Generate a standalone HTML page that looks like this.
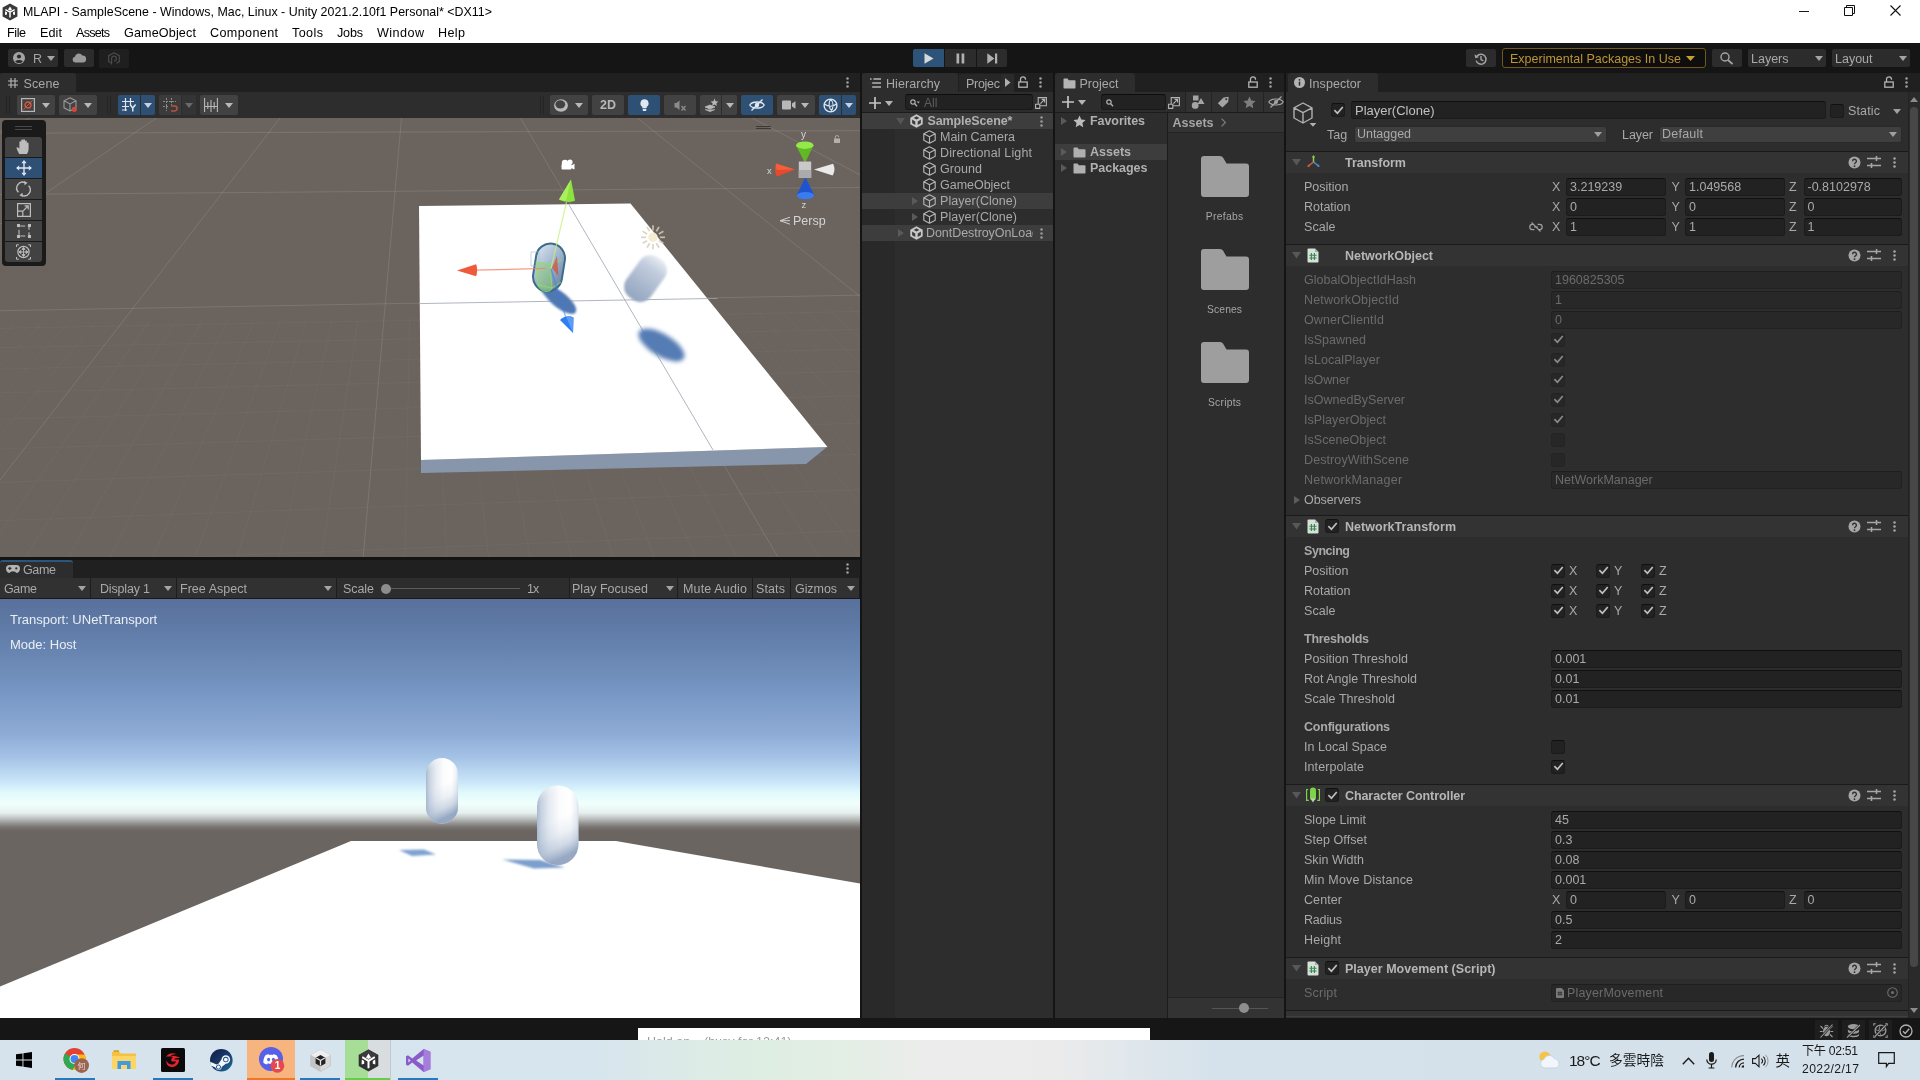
<!DOCTYPE html>
<html lang="en"><head><meta charset="utf-8"><title>Unity</title>
<style>
*{box-sizing:border-box;margin:0;padding:0}
html,body{width:1920px;height:1080px;overflow:hidden;background:#151515;}
body{font-family:"Liberation Sans","Noto Sans CJK TC",sans-serif;font-size:12.5px;color:#a9a9a9;position:relative;will-change:transform}
.a{position:absolute}
.t{position:absolute;white-space:nowrap;line-height:16px;height:16px}
.b{font-weight:bold}
.dis{color:#6b6b6b}
.fld{position:absolute;background:#222222;border:1px solid #1b1b1b;border-top-color:#101010;border-radius:3px;height:18px;padding-left:3px;line-height:16px;white-space:nowrap;overflow:hidden}
.fld.dis{background:#282828;border-color:#222;border-top-color:#1e1e1e;color:#6b6b6b}
.cb{position:absolute;width:13px;height:13px;background:#222222;border:1px solid #1b1b1b;border-top-color:#101010;border-radius:3px}
.cb.dis{background:#272727;border-color:#232323}
.btn{position:absolute;background:#454545;border-radius:2px}
svg{position:absolute;overflow:visible}
.hdr{position:absolute;left:1286px;width:622px;height:22px;background:#333333;border-top:1px solid #1a1a1a}
</style></head>
<body>
<!-- top -->
<div class="a" style="left:0px;top:0px;width:1920px;height:43px;background:#ffffff;"></div>
<svg style="left:2px;top:2.5px" width="16" height="18" viewBox="0 0 16 18"><path d="M8 0.4L15.4 4.6V13.4L8 17.6L0.6 13.4V4.6Z" fill="#3a3a3a"/><path d="M8 9.2V14.6M8 9.2L3.4 6.6M8 9.2L12.6 6.6" stroke="#ffffff" stroke-width="1.5" fill="none"/><path d="M8 3.4L10 6.6L8 7.8L6 6.6ZM3 12L3.1 8.2L5 9.3V11.4ZM13 12L12.9 8.2L11 9.3V11.4Z" fill="#ffffff"/></svg>
<div class="t" style="left:23px;top:4px;font-size:12.4px;letter-spacing:0.03px;color:#000">MLAPI - SampleScene - Windows, Mac, Linux - Unity 2021.2.10f1 Personal* &lt;DX11&gt;</div>
<div class="a" style="left:1799px;top:11px;width:10px;height:1px;background:#1a1a1a;"></div>
<svg style="left:1844px;top:5px" width="11" height="11" viewBox="0 0 11 11"><path d="M0.5 2.5H8.5V10.5H0.5Z M2.5 2.5V0.5H10.5V8.5H8.5" fill="none" stroke="#111" stroke-width="1"/></svg>
<svg style="left:1890px;top:5px" width="11" height="11" viewBox="0 0 11 11"><path d="M0.5 0.5L10.5 10.5M10.5 0.5L0.5 10.5" stroke="#111" stroke-width="1.1"/></svg>
<div class="t" style="left:7px;top:25px;font-size:12.6px;letter-spacing:-0.43px;color:#000">File</div>
<div class="t" style="left:40px;top:25px;font-size:12.6px;letter-spacing:0.10px;color:#000">Edit</div>
<div class="t" style="left:76px;top:25px;font-size:12.6px;letter-spacing:-0.76px;color:#000">Assets</div>
<div class="t" style="left:124px;top:25px;font-size:12.6px;letter-spacing:0.14px;color:#000">GameObject</div>
<div class="t" style="left:210px;top:25px;font-size:12.6px;letter-spacing:0.36px;color:#000">Component</div>
<div class="t" style="left:292px;top:25px;font-size:12.6px;letter-spacing:0.40px;color:#000">Tools</div>
<div class="t" style="left:337px;top:25px;font-size:12.6px;letter-spacing:-0.20px;color:#000">Jobs</div>
<div class="t" style="left:377px;top:25px;font-size:12.6px;letter-spacing:0.44px;color:#000">Window</div>
<div class="t" style="left:438px;top:25px;font-size:12.6px;letter-spacing:0.36px;color:#000">Help</div>
<div class="a" style="left:0px;top:43px;width:1920px;height:30px;background:#151515;"></div>
<div class="a" style="left:8px;top:49px;width:50px;height:18px;background:#2c2c2c;border-radius:2px"></div>
<svg style="left:13px;top:52px" width="12" height="12" viewBox="0 0 12 12"><circle cx="6" cy="6" r="6" fill="#a4a4a4"/><circle cx="6" cy="4.5" r="2.1" fill="#2c2c2c"/><path d="M2.2 9.6C3 7.6 9 7.6 9.8 9.6C8 11.6 4 11.6 2.2 9.6Z" fill="#2c2c2c"/></svg>
<div class="t" style="left:33px;top:50.6px;color:#a4a4a4">R</div>
<svg style="left:47.0px;top:56.0px" width="8" height="5" viewBox="0 0 8 5"><path d="M0 0H8L4.0 5Z" fill="#a4a4a4"/></svg>
<div class="a" style="left:64px;top:49px;width:30px;height:18px;background:#2c2c2c;border-radius:2px"></div>
<svg style="left:72px;top:53px" width="14" height="10" viewBox="0 0 14 10"><path d="M3.2 9.6a3 3 0 0 1-.3-5.9A4 4 0 0 1 10.3 2.6a3.5 3.5 0 0 1 .6 7Z" fill="#9a9a9a"/></svg>
<div class="a" style="left:99px;top:49px;width:30px;height:19px;background:#1f1f1f;border-radius:2px"></div>
<svg style="left:108px;top:52px" width="12" height="13" viewBox="0 0 12 13"><path d="M6 0.7L11.3 3.7V9.6L8.6 11.2M6 0.7L0.7 3.7V9.6L3.2 11" fill="none" stroke="#4a4a4a" stroke-width="1.2"/><path d="M3.6 12.6V6.6a2.4 2.4 0 1 1 2.4 2.4" fill="none" stroke="#4a4a4a" stroke-width="1.2"/></svg>
<div class="a" style="left:913px;top:49px;width:31px;height:18px;background:#2d5378;border-radius:2px 0 0 2px"></div>
<div class="a" style="left:945px;top:49px;width:31px;height:18px;background:#2c2c2c;"></div>
<div class="a" style="left:977px;top:49px;width:30px;height:18px;background:#2c2c2c;border-radius:0 2px 2px 0"></div>
<svg style="left:924px;top:53px" width="10" height="11" viewBox="0 0 10 11"><path d="M0.5 0.3V10.7L9.5 5.5Z" fill="#d8d8d8"/></svg>
<svg style="left:956px;top:53px" width="9" height="11" viewBox="0 0 9 11"><path d="M0.5 0.5H3.2V10.5H0.5ZM5.6 0.5H8.3V10.5H5.6Z" fill="#b0b0b0"/></svg>
<svg style="left:987px;top:53px" width="11" height="11" viewBox="0 0 11 11"><path d="M0.3 0.3V10.7L7.4 5.5ZM8 0.5H10.2V10.5H8Z" fill="#b0b0b0"/></svg>
<div class="a" style="left:1466px;top:49px;width:30px;height:18px;background:#2c2c2c;border-radius:2px"></div>
<svg style="left:1474px;top:51.5px" width="14" height="14" viewBox="0 0 14 14"><path d="M3 4.2A5 5 0 1 1 2.2 8.6" fill="none" stroke="#a4a4a4" stroke-width="1.5"/><path d="M0.6 2.2L1.2 6.2L5 5.2Z" fill="#a4a4a4"/><path d="M7 4V7.6L9.4 8.8" fill="none" stroke="#a4a4a4" stroke-width="1.4"/></svg>
<div class="a" style="left:1502px;top:48px;width:204px;height:20px;background:#0e0e0e;border:1px solid #71591c;border-radius:3px"></div>
<div class="t" style="left:1510px;top:50.6px;color:#bd9534">Experimental Packages In Use</div>
<svg style="left:1685.5px;top:56.0px" width="9" height="5" viewBox="0 0 9 5"><path d="M0 0H9L4.5 5Z" fill="#c9a02c"/></svg>
<div class="a" style="left:1712px;top:49px;width:30px;height:18px;background:#2c2c2c;border-radius:2px"></div>
<svg style="left:1720px;top:52px" width="14" height="13" viewBox="0 0 14 13"><circle cx="5" cy="5" r="4" fill="none" stroke="#a4a4a4" stroke-width="1.4"/><path d="M8 8L12.6 12.2" stroke="#a4a4a4" stroke-width="1.8"/></svg>
<div class="a" style="left:1748px;top:49px;width:78px;height:18px;background:#2c2c2c;border-radius:2px"></div>
<div class="t" style="left:1751px;top:50.6px;">Layers</div>
<svg style="left:1815.0px;top:56.0px" width="8" height="5" viewBox="0 0 8 5"><path d="M0 0H8L4.0 5Z" fill="#a4a4a4"/></svg>
<div class="a" style="left:1832px;top:49px;width:78px;height:18px;background:#2c2c2c;border-radius:2px"></div>
<div class="t" style="left:1835px;top:50.6px;">Layout</div>
<svg style="left:1899.0px;top:56.0px" width="8" height="5" viewBox="0 0 8 5"><path d="M0 0H8L4.0 5Z" fill="#a4a4a4"/></svg>
<!-- scene -->
<div class="a" style="left:0px;top:73px;width:860px;height:19px;background:#202020;"></div>
<div class="a" style="left:0px;top:73px;width:76px;height:19px;background:#2d2d2d;border-radius:3px 3px 0 0"></div>
<svg style="left:7.5px;top:77.5px" width="10" height="10" viewBox="0 0 10 10"><path d="M3 0V10M7 0V10M0 3H10M0 7H10" stroke="#b8b8b8" stroke-width="1.1"/></svg>
<div class="t" style="left:23.5px;top:75.6px;font-size:12.5px;letter-spacing:0.14px;">Scene</div>
<svg style="left:845.5px;top:76.5px" width="3" height="11" viewBox="0 0 3 11"><circle cx="1.5" cy="1.5" r="1.25" fill="#a0a0a0"/><circle cx="1.5" cy="5.5" r="1.25" fill="#a0a0a0"/><circle cx="1.5" cy="9.5" r="1.25" fill="#a0a0a0"/></svg>
<div class="a" style="left:0px;top:92px;width:860px;height:26px;background:#2d2d2d;"></div>
<div class="a" style="left:6px;top:96px;width:1px;height:18px;background:#242424;"></div><div class="a" style="left:9px;top:96px;width:1px;height:18px;background:#242424;"></div>
<div class="a" style="left:107px;top:96px;width:1px;height:18px;background:#242424;"></div><div class="a" style="left:110px;top:96px;width:1px;height:18px;background:#242424;"></div>
<div class="a" style="left:17px;top:95px;width:38px;height:20px;background:#424242;border-radius:2px"></div>
<svg style="left:21px;top:98px" width="14" height="14" viewBox="0 0 14 14"><rect x="0.6" y="0.6" width="12.8" height="12.8" fill="none" stroke="#b8b8b8" stroke-width="1.2"/><circle cx="7" cy="7" r="3" fill="none" stroke="#d9573f" stroke-width="1.3"/><path d="M2.5 11.5L11.5 2.5" stroke="#d9573f" stroke-width="1"/></svg>
<svg style="left:41.5px;top:103.0px" width="8" height="5" viewBox="0 0 8 5"><path d="M0 0H8L4.0 5Z" fill="#b8b8b8"/></svg>
<div class="a" style="left:59px;top:95px;width:38px;height:20px;background:#424242;border-radius:2px"></div>
<svg style="left:63px;top:97px" width="15" height="16" viewBox="0 0 15 16"><path d="M7 0.8L13 3.8V10.8L7 14L1 10.8V3.8ZM1 3.8L7 7L13 3.8M7 7V14" fill="none" stroke="#9a9a9a" stroke-width="1.1"/><circle cx="11.3" cy="12.3" r="2.6" fill="#d1473a"/></svg>
<svg style="left:83.5px;top:103.0px" width="8" height="5" viewBox="0 0 8 5"><path d="M0 0H8L4.0 5Z" fill="#b8b8b8"/></svg>
<div class="a" style="left:118px;top:95px;width:22px;height:20px;background:#2f5075;border-radius:2px 0 0 2px"></div>
<div class="a" style="left:141px;top:95px;width:14px;height:20px;background:#2f5075;border-radius:0 2px 2px 0"></div>
<svg style="left:122px;top:98px" width="16" height="14" viewBox="0 0 16 14"><path d="M3.5 0V13M8.5 0V7M0 3.5H12M0 8.5H7M0 12H5" stroke="#dfe6ee" stroke-width="1.2" fill="none"/><path d="M8 6.5L10.8 10L13.6 6.5M10.8 10V13.5" stroke="#dfe6ee" stroke-width="1.5" fill="none"/></svg>
<svg style="left:144.0px;top:103.0px" width="8" height="5" viewBox="0 0 8 5"><path d="M0 0H8L4.0 5Z" fill="#c8d2de"/></svg>
<div class="a" style="left:159px;top:95px;width:22px;height:20px;background:#3b3b3b;border-radius:2px 0 0 2px"></div>
<div class="a" style="left:182px;top:95px;width:14px;height:20px;background:#343434;border-radius:0 2px 2px 0"></div>
<svg style="left:163px;top:98px" width="15" height="14" viewBox="0 0 15 14"><path d="M3.5 0V13M8.5 0V7M0 3.5H13M0 8.5H6" stroke="#8a8a8a" stroke-width="1" stroke-dasharray="2 1" fill="none"/><path d="M8 8H11.5A2.5 2.5 0 0 1 11.5 13H8" stroke="#b4563c" stroke-width="1.6" fill="none"/></svg>
<svg style="left:185.0px;top:103.0px" width="8" height="5" viewBox="0 0 8 5"><path d="M0 0H8L4.0 5Z" fill="#6a6a6a"/></svg>
<div class="a" style="left:200px;top:95px;width:38px;height:20px;background:#424242;border-radius:2px"></div>
<svg style="left:204px;top:98px" width="14" height="14" viewBox="0 0 14 14"><path d="M0.6 0V14M3.8 4V11M7 2V14M10.2 4V11M13.4 0V14M0.6 8.5H13.4" stroke="#b8b8b8" stroke-width="1.1" fill="none"/></svg>
<svg style="left:224.5px;top:103.0px" width="8" height="5" viewBox="0 0 8 5"><path d="M0 0H8L4.0 5Z" fill="#b8b8b8"/></svg>
<div class="a" style="left:540px;top:96px;width:1px;height:18px;background:#242424;"></div><div class="a" style="left:543px;top:96px;width:1px;height:18px;background:#242424;"></div>
<div class="a" style="left:550px;top:95px;width:38px;height:20px;background:#424242;border-radius:2px"></div>
<svg style="left:554px;top:98.5px" width="14" height="13" viewBox="0 0 14 13"><ellipse cx="7" cy="6.5" rx="6.9" ry="6.2" fill="#b8b8b8"/><ellipse cx="6.3" cy="5.4" rx="4.9" ry="4.1" fill="#424242"/></svg>
<svg style="left:574.5px;top:103.0px" width="8" height="5" viewBox="0 0 8 5"><path d="M0 0H8L4.0 5Z" fill="#b8b8b8"/></svg>
<div class="a" style="left:592px;top:95px;width:32px;height:20px;background:#424242;border-radius:2px"></div>
<div class="t b" style="left:600px;top:97px;font-size:12.5px;letter-spacing:0.02px;color:#b8b8b8">2D</div>
<div class="a" style="left:628px;top:95px;width:32px;height:20px;background:#2f5075;border-radius:2px"></div>
<svg style="left:639.5px;top:99px" width="9" height="13" viewBox="0 0 9 13"><path d="M4.5 0.3a4 4 0 0 1 2.2 7.4V9.2H2.3V7.7A4 4 0 0 1 4.5 0.3Z" fill="#dfe6ee"/><rect x="2.8" y="10" width="3.4" height="2" fill="#dfe6ee"/></svg>
<div class="a" style="left:664px;top:95px;width:32px;height:20px;background:#424242;border-radius:2px"></div>
<svg style="left:674px;top:99px" width="14" height="13" viewBox="0 0 14 13"><path d="M0.5 4H2.5L5.5 1.5V11L2.5 8.5H0.5Z" fill="#8c8c8c"/><path d="M7.5 7L11.5 11.5M11.5 7L7.5 11.5" stroke="#8c8c8c" stroke-width="1.3"/></svg>
<div class="a" style="left:700px;top:95px;width:21px;height:20px;background:#424242;border-radius:2px 0 0 2px"></div>
<div class="a" style="left:722px;top:95px;width:15px;height:20px;background:#424242;border-radius:0 2px 2px 0"></div>
<svg style="left:703.5px;top:98px" width="15" height="14" viewBox="0 0 15 14"><path d="M1 9L6 7L11 9L6 11ZM1 11.5L6 13.5L11 11.5" fill="#b8b8b8" stroke="#b8b8b8" stroke-width="0.8"/><path d="M10.5 0.5L11.6 3.2L14.4 3.6L12.3 5.4L12.9 8L10.5 6.6L8.1 8L8.7 5.4L6.6 3.6L9.4 3.2Z" fill="#b8b8b8"/></svg>
<svg style="left:725.5px;top:103.0px" width="8" height="5" viewBox="0 0 8 5"><path d="M0 0H8L4.0 5Z" fill="#b8b8b8"/></svg>
<div class="a" style="left:741px;top:95px;width:32px;height:20px;background:#2f5075;border-radius:2px"></div>
<svg style="left:749px;top:99px" width="16" height="12" viewBox="0 0 16 12"><path d="M0.8 6C3 2 13 2 15.2 6C13 10 3 10 0.8 6Z" fill="none" stroke="#dfe6ee" stroke-width="1.3"/><circle cx="8" cy="6" r="2.2" fill="#dfe6ee"/><path d="M2.5 11.5L13.5 0.5" stroke="#dfe6ee" stroke-width="1.4"/></svg>
<div class="a" style="left:777px;top:95px;width:38px;height:20px;background:#424242;border-radius:2px"></div>
<svg style="left:782px;top:100px" width="14" height="10" viewBox="0 0 14 10"><rect x="0" y="0.5" width="9" height="9" rx="1" fill="#b8b8b8"/><path d="M10 3.5L13.5 1.2V8.8L10 6.5Z" fill="#b8b8b8"/></svg>
<svg style="left:800.5px;top:103.0px" width="8" height="5" viewBox="0 0 8 5"><path d="M0 0H8L4.0 5Z" fill="#b8b8b8"/></svg>
<div class="a" style="left:819px;top:95px;width:22px;height:20px;background:#2f5075;border-radius:2px 0 0 2px"></div>
<div class="a" style="left:842px;top:95px;width:14px;height:20px;background:#2f5075;border-radius:0 2px 2px 0"></div>
<svg style="left:822.5px;top:97.5px" width="15" height="15" viewBox="0 0 15 15"><circle cx="7.5" cy="7.5" r="6.4" fill="none" stroke="#dfe6ee" stroke-width="1.4"/><path d="M1.5 6C5 9 10 9 13.5 6M7.5 1.2C5 5 5.6 10.5 9.5 13.5M7.5 1.2C10.5 4 11.5 9 7.5 14" fill="none" stroke="#dfe6ee" stroke-width="1.1"/></svg>
<svg style="left:845.0px;top:103.0px" width="8" height="5" viewBox="0 0 8 5"><path d="M0 0H8L4.0 5Z" fill="#c8d2de"/></svg>
<svg style="left:0;top:118px" width="860" height="439" viewBox="0 118 860 439"><defs><clipPath id="svc"><rect x="0" y="118" width="860" height="439"/></clipPath><linearGradient id="cap2" x1="0.5" y1="0" x2="0.5" y2="1"><stop offset="0" stop-color="#e9edf3"/><stop offset="0.25" stop-color="#c3cede"/><stop offset="0.65" stop-color="#a9b7cd"/><stop offset="1" stop-color="#93a5c0"/></linearGradient><linearGradient id="cap1" x1="0" y1="0" x2="1" y2="1"><stop offset="0" stop-color="#dfe8f2"/><stop offset="0.5" stop-color="#9db4cc"/><stop offset="1" stop-color="#5f7f9e"/></linearGradient><filter id="bl1" x="-20%" y="-20%" width="140%" height="140%"><feGaussianBlur stdDeviation="1.2"/></filter><filter id="bl05" x="-20%" y="-20%" width="140%" height="140%"><feGaussianBlur stdDeviation="0.7"/></filter><filter id="bl2" x="-20%" y="-20%" width="140%" height="140%"><feGaussianBlur stdDeviation="2"/></filter></defs><g clip-path="url(#svc)"><rect x="0" y="118" width="860" height="439" fill="#6b635e"/><path d="M-265.1 329.3L-1103.5 806.6M-236.5 328.8L-1035.7 802.8M-208.1 328.2L-968.5 799.1M-179.9 327.7L-902.0 795.4M-123.7 326.6L-771.2 788.2M-95.9 326.1L-706.8 784.6M-68.1 325.5L-643.0 781.1M-40.5 325.0L-579.9 777.6M-13.1 324.5L-517.5 774.2M14.3 324.0L-455.7 770.7M41.5 323.4L-394.5 767.4M68.6 322.9L-333.9 764.0M95.6 322.4L-273.9 760.7M149.1 321.4L-155.7 754.2M175.7 320.8L-97.5 750.9M202.2 320.3L-39.9 747.8M228.5 319.8L17.2 744.6M254.8 319.3L73.8 741.5M280.9 318.8L129.7 738.4M306.9 318.3L185.2 735.3M332.7 317.8L240.1 732.3M358.5 317.3L294.5 729.3M409.7 316.3L401.8 723.3M435.1 315.9L454.7 720.4M460.4 315.4L507.1 717.5M485.5 314.9L559.0 714.6M510.6 314.4L610.4 711.8M535.6 313.9L661.3 709.0M560.4 313.4L711.8 706.2M585.1 313.0L761.8 703.4M609.8 312.5L811.4 700.7M658.7 311.5L909.2 695.3M683.0 311.1L957.4 692.6M707.2 310.6L1005.2 690.0M731.3 310.1L1052.6 687.4M755.3 309.7L1099.6 684.8M779.1 309.2L1146.2 682.2M802.9 308.8L1192.3 679.6M826.6 308.3L1238.1 677.1M850.1 307.9L1283.4 674.6M897.0 307.0L1372.9 669.6M920.2 306.5L1417.1 667.2M943.4 306.1L1460.9 664.8M966.5 305.6L1504.4 662.4M989.4 305.2L1547.5 660.0M1012.3 304.7L1590.2 657.6M1035.1 304.3L1632.5 655.3M1057.7 303.9L1674.5 653.0M1080.3 303.4L1716.2 650.7M-441.0 337.0L1220.1 304.4M-486.7 358.0L1256.7 321.0M-537.4 381.4L1296.8 339.1M-594.3 407.7L1341.0 359.1M-658.3 437.2L1389.7 381.1M-730.9 470.7L1444.0 405.7M-814.1 509.1L1504.6 433.1M-910.3 553.5L1572.9 463.9M-1022.9 605.4L1650.3 498.9M-1316.8 741.0L1840.9 585.2" stroke="#ffffff" stroke-opacity="0.03" stroke-width="1" fill="none"/><path d="M-93.3 116.3L-2297.3 872.6M34.4 116.1L-1526.5 830.0M159.5 115.9L-836.3 791.8M281.9 115.7L-214.5 757.4M401.7 115.5L348.4 726.3M519.0 115.4L860.5 698.0M633.9 115.2L1328.4 672.1M746.5 115.0L1757.5 648.4M856.8 114.9L2152.5 626.5M964.9 114.7L2517.2 606.4M-100.3 133.5L921.7 130.5M-270.1 196.7L1069.0 185.8M-606.1 321.7L1337.5 286.5M-1585.3 685.9L1981.8 528.2" stroke="#ffffff" stroke-opacity="0.115" stroke-width="1" fill="none"/><path d="M421 460L827 447L806 464L421 473Z" fill="#8896ac"/><path d="M419 206L630.5 203.5L827.5 447L421 460Z" fill="#ffffff"/><path d="M419 303.6L717.5 298.4" stroke="#9aa3ad" stroke-width="0.8" fill="none"/><path d="M568.8 204.5L713 450" stroke="#9aa3ad" stroke-width="0.8" fill="none"/><path d="M541 287C548 283 562 290 570 299C578 307 578 314 572 314C564 314 552 305 546 297C542 292 539 289 541 287Z" fill="#4f78b3" filter="url(#bl1)"/><ellipse cx="661.5" cy="345" rx="26" ry="11" transform="rotate(31 661.5 345)" fill="#547bb4" filter="url(#bl2)"/><rect x="630.5" y="254" width="30" height="49" rx="13" transform="rotate(36 645.5 278.5)" fill="url(#cap2)" filter="url(#bl1)"/><rect x="534.5" y="243.5" width="29" height="48" rx="14.5" transform="rotate(9 549 267.5)" fill="url(#cap1)" stroke="#3d6c8a" stroke-width="2"/><path d="M536 262L538 285L552 288L550 264ZM550 264L562 260M552 288L561 282M538 285C540 292 550 294 552 288" fill="#8fd46a" fill-opacity="0.45" stroke="#8fe05a" stroke-width="0.8"/><path d="M552 268L557 256L558.5 276Z" fill="#d8503c" fill-opacity="0.75"/><rect x="531" y="252" width="8" height="14" fill="none" stroke="#9ab8d8" stroke-width="0.6"/><path d="M551 268.5L566.5 202" stroke="#c4f07c" stroke-width="1.2" stroke-opacity="0.75"/><path d="M571 179.5L575 200.5C571 203 563 202 559 199.5Z" fill="#8de33c"/><path d="M571 179.5L566 201L559 199.5Z" fill="#a8f060"/><path d="M546 268.4L475 270.2" stroke="#f08468" stroke-width="1.2" stroke-opacity="0.8"/><path d="M457 270.5L476 264.2C477.5 267 477.5 273 476 276.2Z" fill="#f05a3c"/><path d="M551 269L566 318" stroke="#3c78e6" stroke-width="1.4" stroke-opacity="0.5"/><path d="M573 333L560 320C563 316 570 315 573.5 317.5Z" fill="#2f7df0"/><path d="M573 333L573.5 317.5L566 316.5Z" fill="#5a9cf8"/><g fill="#ffffff"><circle cx="565" cy="163" r="3.2"/><circle cx="570" cy="162" r="2.6"/><rect x="561.5" y="164" width="10" height="5.5" rx="1"/><path d="M571 165.5L574.5 163.8V169.6L571 168Z"/></g><path d="M659.8 237.3L665.0 237.3" stroke="#d6cfba" stroke-opacity="0.85" stroke-width="1.7"/><path d="M658.9 240.7L663.4 243.3" stroke="#d6cfba" stroke-opacity="0.85" stroke-width="1.7"/><path d="M656.4 243.2L659.0 247.7" stroke="#d6cfba" stroke-opacity="0.85" stroke-width="1.7"/><path d="M653.0 244.1L653.0 249.3" stroke="#d6cfba" stroke-opacity="0.85" stroke-width="1.7"/><path d="M649.6 243.2L647.0 247.7" stroke="#d6cfba" stroke-opacity="0.85" stroke-width="1.7"/><path d="M647.1 240.7L642.6 243.3" stroke="#d6cfba" stroke-opacity="0.85" stroke-width="1.7"/><path d="M646.2 237.3L641.0 237.3" stroke="#d6cfba" stroke-opacity="0.85" stroke-width="1.7"/><path d="M647.1 233.9L642.6 231.3" stroke="#d6cfba" stroke-opacity="0.85" stroke-width="1.7"/><path d="M649.6 231.4L647.0 226.9" stroke="#d6cfba" stroke-opacity="0.85" stroke-width="1.7"/><path d="M653.0 230.5L653.0 225.3" stroke="#d6cfba" stroke-opacity="0.85" stroke-width="1.7"/><path d="M656.4 231.4L659.0 226.9" stroke="#d6cfba" stroke-opacity="0.85" stroke-width="1.7"/><path d="M658.9 233.9L663.4 231.3" stroke="#d6cfba" stroke-opacity="0.85" stroke-width="1.7"/><circle cx="653" cy="237.3" r="4.7" fill="#f6ecd0"/><g><path d="M796 145.5C799 142 810 142 813.5 145.5L805 163Z" fill="#62b822"/><ellipse cx="804.8" cy="145.2" rx="8.7" ry="3.7" fill="#93e84a"/><path d="M776 163.4L795 169.6L777 176.6C774.6 173 774.6 167 776 163.4Z" fill="#e8482c"/><path d="M776 163.4L795 169.6L776.4 170Z" fill="#f0603c"/><path d="M833 163.8L814 169.6L832.6 175.4C835 172 835 167 833 163.8Z" fill="#e9e9e9"/><path d="M805.4 177L814.4 195.5C810.4 200.4 800 200.4 796.6 195.5Z" fill="#1f54cf"/><ellipse cx="805.5" cy="195.6" rx="8.6" ry="3.6" fill="#3a7cf0"/><rect x="798.8" y="161.5" width="12.4" height="16.5" fill="#c8c8c8"/><path d="M798.8 170H811.2V178H798.8Z" fill="#ababab"/></g><text x="801" y="137.5" font-size="10" fill="#d8d8d8" font-family="Liberation Sans, sans-serif">y</text><text x="767" y="174" font-size="9.5" fill="#d8d8d8" font-family="Liberation Sans, sans-serif">x</text><text x="801.5" y="208" font-size="9.5" fill="#d8d8d8" font-family="Liberation Sans, sans-serif">z</text><path d="M790 217.2L780 220.7L790 224.2M780 220.7H790" stroke="#d0d0d0" stroke-width="1" fill="none"/><text x="793" y="225" font-size="12.5" fill="#d4d4d4" font-family="Liberation Sans, sans-serif">Persp</text><rect x="834" y="138.5" width="6" height="4.5" fill="#b5b0ac"/><path d="M835.3 138.5V137.2a1.7 1.7 0 0 1 3.4 0" stroke="#b5b0ac" stroke-width="0.9" fill="none"/><path d="M756 126.5H771M756 128.5H771" stroke="#3d3834" stroke-width="1"/></g></svg>
<div class="a" style="left:2px;top:120px;width:44px;height:146px;background:#1a1a1a;border-radius:4px"></div>
<div class="a" style="left:15px;top:126px;width:17px;height:1px;background:#4a4a4a;"></div><div class="a" style="left:15px;top:129px;width:17px;height:1px;background:#4a4a4a;"></div>
<div class="a" style="left:5px;top:137px;width:37px;height:20px;background:#424242;border-radius:3px 3px 0 0"></div>
<div class="a" style="left:5px;top:158px;width:37px;height:20px;background:#2f5075;"></div>
<div class="a" style="left:5px;top:179px;width:37px;height:20px;background:#424242;"></div>
<div class="a" style="left:5px;top:200px;width:37px;height:20px;background:#424242;"></div>
<div class="a" style="left:5px;top:221px;width:37px;height:20px;background:#424242;"></div>
<div class="a" style="left:5px;top:242px;width:37px;height:20px;background:#424242;border-radius:0 0 3px 3px"></div>
<svg style="left:16px;top:139px" width="15" height="16" viewBox="0 0 15 16"><path d="M3.2 15C1.8 12.5 0.4 10 0.6 8.6C1.4 7.6 2.6 8.6 3.4 9.8V3.2C3.4 1.8 5.2 1.8 5.2 3.2V1.6C5.2 0.2 7.1 0.2 7.1 1.6V1.2C7.1 -0.1 9 -0.1 9 1.4V2.4C9 1.2 10.8 1.2 10.8 2.6V4.4C11 3.2 12.6 3.4 12.6 4.8V9.5C12.6 12 11.8 13.5 11 15Z" fill="#bdbdbd"/></svg>
<svg style="left:15.5px;top:160px" width="16" height="16" viewBox="0 0 16 16"><path d="M8 0L10.6 3.2H8.7V7.3H12.8V5.4L16 8L12.8 10.6V8.7H8.7V12.8H10.6L8 16L5.4 12.8H7.3V8.7H3.2V10.6L0 8L3.2 5.4V7.3H7.3V3.2H5.4Z" fill="#dfe6ee"/></svg>
<svg style="left:16px;top:181px" width="15" height="16" viewBox="0 0 15 16"><path d="M9.2 1.6A6 6 0 0 0 2.4 11.2M5.8 14.4A6 6 0 0 0 12.6 4.8" fill="none" stroke="#bdbdbd" stroke-width="1.4"/><path d="M8 0L11.6 1.8L8.6 4.2ZM7 16L3.4 14.2L6.4 11.8Z" fill="#bdbdbd"/></svg>
<svg style="left:16.5px;top:202.5px" width="14" height="14" viewBox="0 0 14 14"><path d="M0.6 0.6H13.4V13.4H0.6Z" fill="none" stroke="#bdbdbd" stroke-width="1.2"/><path d="M0.6 8.2H5.8V13.4" fill="none" stroke="#bdbdbd" stroke-width="1.2"/><path d="M6.2 7.8L11 3M7.6 2.8H11.2V6.4" fill="none" stroke="#bdbdbd" stroke-width="1.2"/></svg>
<svg style="left:16.5px;top:223.5px" width="14" height="14" viewBox="0 0 14 14"><path d="M2 2H12V12H2Z" fill="none" stroke="#bdbdbd" stroke-width="1.1" stroke-dasharray="5 2.5" stroke-dashoffset="-1.2"/><rect x="0" y="0" width="3" height="3" fill="#bdbdbd"/><rect x="11" y="0" width="3" height="3" fill="#bdbdbd"/><rect x="0" y="11" width="3" height="3" fill="#bdbdbd"/><rect x="11" y="11" width="3" height="3" fill="#bdbdbd"/></svg>
<svg style="left:16px;top:244px" width="15" height="16" viewBox="0 0 15 16"><circle cx="7.5" cy="8" r="5.6" fill="none" stroke="#bdbdbd" stroke-width="1.2"/><path d="M7.5 3.4L9 5.4H6ZM7.5 12.6L9 10.6H6ZM2.9 8L4.9 6.5V9.5ZM12.1 8L10.1 6.5V9.5ZM7.5 5V11M4.5 8H10.5" stroke="#bdbdbd" stroke-width="0.9" fill="#bdbdbd"/><path d="M0.5 3V0.8H2.8M12.2 0.8H14.5V3M0.5 13V15.2H2.8M12.2 15.2H14.5V13" fill="none" stroke="#bdbdbd" stroke-width="1"/></svg>
<div class="a" style="left:0px;top:557px;width:860px;height:3px;background:#141414;"></div>
<!-- game -->
<div class="a" style="left:0px;top:560px;width:860px;height:18px;background:#202020;"></div>
<div class="a" style="left:0px;top:560px;width:73px;height:18px;background:#2d2d2d;border-radius:3px 3px 0 0;border-top:2px solid #2c5580"></div>
<svg style="left:6px;top:564.5px" width="14" height="8" viewBox="0 0 14 8"><path d="M3.6 0H10.4A3.6 3.6 0 0 1 14 3.6C14 6 12.6 8 11 8C9.8 8 9.4 6.4 8.4 6.4H5.6C4.6 6.4 4.2 8 3 8C1.4 8 0 6 0 3.6A3.6 3.6 0 0 1 3.6 0Z" fill="#b4b4b4"/><path d="M3.8 1.8V5M2.2 3.4H5.4" stroke="#2d2d2d" stroke-width="1.1"/><circle cx="10.3" cy="3.4" r="1.1" fill="#2d2d2d"/></svg>
<div class="t" style="left:23px;top:561.6px;font-size:12.5px;letter-spacing:-0.35px;">Game</div>
<svg style="left:845.5px;top:562.5px" width="3" height="11" viewBox="0 0 3 11"><circle cx="1.5" cy="1.5" r="1.25" fill="#a0a0a0"/><circle cx="1.5" cy="5.5" r="1.25" fill="#a0a0a0"/><circle cx="1.5" cy="9.5" r="1.25" fill="#a0a0a0"/></svg>
<div class="a" style="left:0px;top:578px;width:860px;height:21px;background:#2d2d2d;"></div>
<div class="a" style="left:0px;top:578px;width:91px;height:20px;background:#313131;border-right:1px solid #1d1d1d"></div>
<div class="a" style="left:91px;top:578px;width:86px;height:20px;background:#313131;border-right:1px solid #1d1d1d"></div>
<div class="a" style="left:177px;top:578px;width:160px;height:20px;background:#313131;border-right:1px solid #1d1d1d"></div>
<div class="t" style="left:4px;top:581px;font-size:12.5px;letter-spacing:-0.35px;">Game</div>
<svg style="left:78.0px;top:586.0px" width="8" height="5" viewBox="0 0 8 5"><path d="M0 0H8L4.0 5Z" fill="#a4a4a4"/></svg>
<div class="t" style="left:100px;top:581px;font-size:12.5px;letter-spacing:-0.18px;">Display 1</div>
<svg style="left:164.0px;top:586.0px" width="8" height="5" viewBox="0 0 8 5"><path d="M0 0H8L4.0 5Z" fill="#a4a4a4"/></svg>
<div class="t" style="left:180px;top:581px;font-size:12.5px;letter-spacing:0.03px;">Free Aspect</div>
<svg style="left:324.0px;top:586.0px" width="8" height="5" viewBox="0 0 8 5"><path d="M0 0H8L4.0 5Z" fill="#a4a4a4"/></svg>
<div class="t" style="left:343px;top:581px;font-size:12.5px;letter-spacing:-0.07px;">Scale</div>
<div class="a" style="left:386px;top:588px;width:134px;height:1px;background:#5a5a5a;"></div>
<div class="a" style="left:380.5px;top:583.5px;width:10px;height:10px;background:#8c8c8c;border-radius:50%"></div>
<div class="t" style="left:527px;top:581px;font-size:12.5px;letter-spacing:-1.00px;">1x</div>
<div class="a" style="left:569px;top:578px;width:1px;height:20px;background:#1d1d1d;"></div>
<div class="a" style="left:570px;top:578px;width:108px;height:20px;background:#313131;border-right:1px solid #1d1d1d"></div>
<div class="a" style="left:678px;top:578px;width:75px;height:20px;background:#313131;border-right:1px solid #1d1d1d"></div>
<div class="a" style="left:753px;top:578px;width:38px;height:20px;background:#313131;border-right:1px solid #1d1d1d"></div>
<div class="a" style="left:791px;top:578px;width:69px;height:20px;background:#313131;border-right:1px solid #1d1d1d"></div>
<div class="t" style="left:572px;top:581px;font-size:12.5px;letter-spacing:0.02px;">Play Focused</div>
<svg style="left:665.5px;top:586.0px" width="8" height="5" viewBox="0 0 8 5"><path d="M0 0H8L4.0 5Z" fill="#a4a4a4"/></svg>
<div class="t" style="left:683px;top:581px;font-size:12.5px;letter-spacing:0.16px;">Mute Audio</div>
<div class="t" style="left:756px;top:581px;font-size:12.5px;letter-spacing:0.12px;">Stats</div>
<div class="t" style="left:795px;top:581px;font-size:12.5px;letter-spacing:-0.07px;">Gizmos</div>
<svg style="left:847.0px;top:586.0px" width="8" height="5" viewBox="0 0 8 5"><path d="M0 0H8L4.0 5Z" fill="#a4a4a4"/></svg>
<div class="a" style="left:0px;top:598px;width:860px;height:1px;background:#1a1a1a;"></div>
<svg style="left:0;top:599px" width="860" height="419" viewBox="0 599 860 419"><defs><linearGradient id="sky" x1="0" y1="599" x2="0" y2="841" gradientUnits="userSpaceOnUse"><stop offset="0.000" stop-color="#58709c"/><stop offset="0.178" stop-color="#6480ac"/><stop offset="0.368" stop-color="#7694c1"/><stop offset="0.562" stop-color="#8facd7"/><stop offset="0.657" stop-color="#a5c3e6"/><stop offset="0.752" stop-color="#c8e4f8"/><stop offset="0.802" stop-color="#e1fafc"/><stop offset="0.847" stop-color="#f0fffc"/><stop offset="0.884" stop-color="#e6f0ee"/><stop offset="0.909" stop-color="#b9bebc"/><stop offset="0.926" stop-color="#969694"/><stop offset="0.942" stop-color="#7a7572"/><stop offset="0.959" stop-color="#6b6561"/><stop offset="1.000" stop-color="#6b6561"/></linearGradient><linearGradient id="gcap" x1="0" y1="0" x2="1" y2="0"><stop offset="0" stop-color="#a9b9cf"/><stop offset="0.10" stop-color="#c6d2e1"/><stop offset="0.3" stop-color="#e6ebf2"/><stop offset="0.55" stop-color="#fbfcfd"/><stop offset="0.8" stop-color="#ffffff"/><stop offset="0.94" stop-color="#eef2f7"/><stop offset="1" stop-color="#d9e1ec"/></linearGradient><linearGradient id="gcapv" x1="0" y1="0" x2="0.25" y2="1"><stop offset="0" stop-color="#ffffff" stop-opacity="0.5"/><stop offset="0.2" stop-color="#ffffff" stop-opacity="0"/><stop offset="0.5" stop-color="#8ea2c0" stop-opacity="0"/><stop offset="0.7" stop-color="#8ea2c0" stop-opacity="0.14"/><stop offset="0.85" stop-color="#8ea2c0" stop-opacity="0.4"/><stop offset="1" stop-color="#7d93b4" stop-opacity="0.8"/></linearGradient><filter id="gb" x="-20%" y="-50%" width="140%" height="200%"><feGaussianBlur stdDeviation="0.9"/></filter><filter id="gb2" x="-10%" y="-10%" width="120%" height="120%"><feGaussianBlur stdDeviation="0.5"/></filter><clipPath id="gvc"><rect x="0" y="599" width="860" height="419"/></clipPath></defs><g clip-path="url(#gvc)"><rect x="0" y="599" width="860" height="260" fill="url(#sky)"/><rect x="0" y="840" width="860" height="178" fill="#6b6561"/><path d="M351 841H616L860 883.5V1018H0V986.5Z" fill="#ffffff"/><path d="M399 850L424 849.6L436 854.5L412 856Z" fill="#7fa3d0" filter="url(#gb)"/><path d="M502 859.5L540 860L565 867.5L534 868.5Z" fill="#7b9fcd" filter="url(#gb)"/><g filter="url(#gb2)"><rect x="426" y="758" width="32" height="65.5" rx="16.0" fill="url(#gcap)"/><rect x="426" y="758" width="32" height="65.5" rx="16.0" fill="url(#gcapv)"/></g><g filter="url(#gb2)"><rect x="537" y="785.5" width="41.5" height="79.5" rx="20.75" fill="url(#gcap)"/><rect x="537" y="785.5" width="41.5" height="79.5" rx="20.75" fill="url(#gcapv)"/></g></g></svg>
<div class="t" style="left:10px;top:612px;color:#e9eef5;font-size:13px">Transport: UNetTransport</div>
<div class="t" style="left:10px;top:637px;color:#e9eef5;font-size:13px">Mode: Host</div>
<!-- hier -->
<div class="a" style="left:860px;top:73px;width:2px;height:945px;background:#141414;"></div>
<div class="a" style="left:862px;top:73px;width:191px;height:19px;background:#202020;"></div>
<div class="a" style="left:862px;top:73px;width:96px;height:19px;background:#2d2d2d;border-radius:3px 3px 0 0"></div>
<svg style="left:870px;top:77.5px" width="11" height="10" viewBox="0 0 11 10"><path d="M0 1H1.6M3.4 1H11M2.2 5H11M2.2 9H11M0 5H0.1" stroke="#b4b4b4" stroke-width="1.3" fill="none"/></svg>
<div class="t" style="left:886px;top:75.7px;font-size:12.5px;letter-spacing:0.06px;">Hierarchy</div>
<div class="a" style="left:959px;top:74px;width:42px;height:18px;background:#272727;border-radius:3px 3px 0 0"></div>
<div class="t" style="left:966px;top:75.7px;font-size:12.5px;letter-spacing:-0.29px;width:34.5px;overflow:hidden">Projec</div>
<div class="a" style="left:1001px;top:74px;width:13px;height:18px;background:#2b2b2b;"></div>
<svg style="left:1004.75px;top:78.0px" width="5.5" height="9" viewBox="0 0 5.5 9"><path d="M0 0V9L5.5 4.5Z" fill="#b0b0b0"/></svg>
<svg style="left:1017.5px;top:76px" width="10" height="12" viewBox="0 0 10 12"><path d="M2.5 6V3.3a2.5 2.5 0 0 1 5 0V3.8" fill="none" stroke="#b4b4b4" stroke-width="1.3"/><rect x="0.8" y="6" width="8.4" height="5.2" fill="none" stroke="#b4b4b4" stroke-width="1.3"/></svg>
<svg style="left:1038.5px;top:77.0px" width="3" height="11" viewBox="0 0 3 11"><circle cx="1.5" cy="1.5" r="1.25" fill="#a0a0a0"/><circle cx="1.5" cy="5.5" r="1.25" fill="#a0a0a0"/><circle cx="1.5" cy="9.5" r="1.25" fill="#a0a0a0"/></svg>
<div class="a" style="left:862px;top:92px;width:191px;height:20px;background:#2d2d2d;"></div>
<div class="a" style="left:862px;top:112px;width:191px;height:1px;background:#1c1c1c;"></div>
<svg style="left:869px;top:96.5px" width="12" height="12" viewBox="0 0 12 12"><path d="M6 0V12M0 6H12" stroke="#c4c4c4" stroke-width="1.7"/></svg>
<svg style="left:885.0px;top:100.5px" width="8" height="5" viewBox="0 0 8 5"><path d="M0 0H8L4.0 5Z" fill="#b4b4b4"/></svg>
<div class="a" style="left:905px;top:94px;width:128px;height:16px;background:#222222;border:1px solid #191919;border-top-color:#0d0d0d;border-radius:3px"></div>
<svg style="left:910px;top:98.5px" width="10" height="9" viewBox="0 0 10 9"><circle cx="3" cy="3" r="2.2" fill="none" stroke="#b4b4b4" stroke-width="1.2"/><path d="M4.8 4.8L7 7.2" stroke="#b4b4b4" stroke-width="1.3"/><path d="M6.8 2.6H9.8L8.3 4.4Z" fill="#b4b4b4"/></svg>
<div class="t" style="left:924px;top:94.5px;color:#5e5e5e;font-size:12px">All</div>
<svg style="left:1035px;top:96.5px" width="12" height="12" viewBox="0 0 12 12"><path d="M3.2 0.6H11.4V8.8H3.2Z" fill="none" stroke="#b4b4b4" stroke-width="1.1"/><path d="M0.6 7.2H4.8V11.4H0.6Z" fill="#222222" stroke="#b4b4b4" stroke-width="1.1"/><path d="M5.4 6.6L9.4 2.6M6.6 2.4H9.6V5.4" fill="none" stroke="#b4b4b4" stroke-width="1.1"/></svg>
<div class="a" style="left:862px;top:113px;width:191px;height:905px;background:#2d2d2d;"></div>
<div class="a" style="left:862px;top:113px;width:33px;height:905px;background:#292929;"></div>
<div class="a" style="left:862px;top:113px;width:191px;height:16px;background:#3d3d3d;"></div>
<svg style="left:896.0px;top:117.75px" width="9" height="6.5" viewBox="0 0 9 6.5"><path d="M0 0H9L4.5 6.5Z" fill="#555555"/></svg>
<svg style="left:910px;top:114px" width="13" height="14" viewBox="0 0 13 14"><path d="M6.5 0.2L12.7 3.7V10.3L6.5 13.8L0.3 10.3V3.7Z" fill="#c8c8c8"/><path d="M6.5 2.3L9.3 3.9L6.5 5.5L3.7 3.9Z" fill="#3d3d3d"/><path d="M2.1 5.6L5.3 7.5V10.9L2.1 9.2Z" fill="#3d3d3d"/><path d="M10.9 5.6L7.7 7.5V10.9L10.9 9.2Z" fill="#3d3d3d"/></svg>
<div class="t b" style="left:927.5px;top:113px;font-size:12.5px;letter-spacing:-0.11px;color:#b0b0b0">SampleScene*</div>
<svg style="left:1039.5px;top:115.5px" width="3" height="11" viewBox="0 0 3 11"><circle cx="1.5" cy="1.5" r="1.25" fill="#9a9a9a"/><circle cx="1.5" cy="5.5" r="1.25" fill="#9a9a9a"/><circle cx="1.5" cy="9.5" r="1.25" fill="#9a9a9a"/></svg>
<div class="a" style="left:862px;top:193px;width:191px;height:16px;background:#3d3d3d;"></div>
<svg style="left:923px;top:130px" width="13" height="14" viewBox="0 0 13 14"><path d="M6.5 0.8L12.2 3.8V10.2L6.5 13.2L0.8 10.2V3.8ZM0.8 3.8L6.5 6.8L12.2 3.8M6.5 6.8V13.2" fill="none" stroke="#b4b4b4" stroke-width="1.15" stroke-linejoin="round"/></svg>
<div class="t" style="left:940px;top:129px;font-size:12.5px;letter-spacing:-0.00px;">Main Camera</div>
<svg style="left:923px;top:146px" width="13" height="14" viewBox="0 0 13 14"><path d="M6.5 0.8L12.2 3.8V10.2L6.5 13.2L0.8 10.2V3.8ZM0.8 3.8L6.5 6.8L12.2 3.8M6.5 6.8V13.2" fill="none" stroke="#b4b4b4" stroke-width="1.15" stroke-linejoin="round"/></svg>
<div class="t" style="left:940px;top:145px;font-size:12.5px;letter-spacing:0.15px;">Directional Light</div>
<svg style="left:923px;top:162px" width="13" height="14" viewBox="0 0 13 14"><path d="M6.5 0.8L12.2 3.8V10.2L6.5 13.2L0.8 10.2V3.8ZM0.8 3.8L6.5 6.8L12.2 3.8M6.5 6.8V13.2" fill="none" stroke="#b4b4b4" stroke-width="1.15" stroke-linejoin="round"/></svg>
<div class="t" style="left:940px;top:161px;font-size:12.5px;letter-spacing:0.06px;">Ground</div>
<svg style="left:923px;top:178px" width="13" height="14" viewBox="0 0 13 14"><path d="M6.5 0.8L12.2 3.8V10.2L6.5 13.2L0.8 10.2V3.8ZM0.8 3.8L6.5 6.8L12.2 3.8M6.5 6.8V13.2" fill="none" stroke="#b4b4b4" stroke-width="1.15" stroke-linejoin="round"/></svg>
<div class="t" style="left:940px;top:177px;font-size:12.5px;letter-spacing:-0.02px;">GameObject</div>
<svg style="left:923px;top:194px" width="13" height="14" viewBox="0 0 13 14"><path d="M6.5 0.8L12.2 3.8V10.2L6.5 13.2L0.8 10.2V3.8ZM0.8 3.8L6.5 6.8L12.2 3.8M6.5 6.8V13.2" fill="none" stroke="#b4b4b4" stroke-width="1.15" stroke-linejoin="round"/></svg>
<div class="t" style="left:940px;top:193px;font-size:12.5px;letter-spacing:0.05px;">Player(Clone)</div>
<svg style="left:911.5px;top:197.0px" width="6" height="8" viewBox="0 0 6 8"><path d="M0 0V8L6 4.0Z" fill="#5a5a5a"/></svg>
<svg style="left:923px;top:210px" width="13" height="14" viewBox="0 0 13 14"><path d="M6.5 0.8L12.2 3.8V10.2L6.5 13.2L0.8 10.2V3.8ZM0.8 3.8L6.5 6.8L12.2 3.8M6.5 6.8V13.2" fill="none" stroke="#b4b4b4" stroke-width="1.15" stroke-linejoin="round"/></svg>
<div class="t" style="left:940px;top:209px;font-size:12.5px;letter-spacing:0.05px;">Player(Clone)</div>
<svg style="left:911.5px;top:213.0px" width="6" height="8" viewBox="0 0 6 8"><path d="M0 0V8L6 4.0Z" fill="#5a5a5a"/></svg>
<div class="a" style="left:862px;top:225px;width:191px;height:16px;background:#3d3d3d;"></div>
<svg style="left:897.5px;top:229.0px" width="6" height="8" viewBox="0 0 6 8"><path d="M0 0V8L6 4.0Z" fill="#5a5a5a"/></svg>
<svg style="left:910px;top:226px" width="13" height="14" viewBox="0 0 13 14"><path d="M6.5 0.2L12.7 3.7V10.3L6.5 13.8L0.3 10.3V3.7Z" fill="#c8c8c8"/><path d="M6.5 2.3L9.3 3.9L6.5 5.5L3.7 3.9Z" fill="#3d3d3d"/><path d="M2.1 5.6L5.3 7.5V10.9L2.1 9.2Z" fill="#3d3d3d"/><path d="M10.9 5.6L7.7 7.5V10.9L10.9 9.2Z" fill="#3d3d3d"/></svg>
<div class="t" style="left:926px;top:225px;font-size:12.5px;letter-spacing:-0.06px;width:106.5px;overflow:hidden">DontDestroyOnLoad</div>
<svg style="left:1039.5px;top:227.5px" width="3" height="11" viewBox="0 0 3 11"><circle cx="1.5" cy="1.5" r="1.25" fill="#9a9a9a"/><circle cx="1.5" cy="5.5" r="1.25" fill="#9a9a9a"/><circle cx="1.5" cy="9.5" r="1.25" fill="#9a9a9a"/></svg>
<!-- proj -->
<div class="a" style="left:1053px;top:73px;width:2px;height:945px;background:#141414;"></div>
<div class="a" style="left:1055px;top:73px;width:229px;height:19px;background:#202020;"></div>
<div class="a" style="left:1055px;top:73px;width:80px;height:19px;background:#2d2d2d;border-radius:3px 3px 0 0"></div>
<svg style="left:1063px;top:77.5px" width="13" height="11" viewBox="0 0 13 11"><path d="M0.5 1.2Q0.5 0.5 1.2 0.5H4.6L5.8 2.2H11.8Q12.5 2.2 12.5 2.9V9.8Q12.5 10.5 11.8 10.5H1.2Q0.5 10.5 0.5 9.8Z" fill="#b4b4b4"/></svg>
<div class="t" style="left:1079.5px;top:75.7px;font-size:12.5px;letter-spacing:0.02px;">Project</div>
<svg style="left:1247.5px;top:76px" width="10" height="12" viewBox="0 0 10 12"><path d="M2.5 6V3.3a2.5 2.5 0 0 1 5 0V3.8" fill="none" stroke="#b4b4b4" stroke-width="1.3"/><rect x="0.8" y="6" width="8.4" height="5.2" fill="none" stroke="#b4b4b4" stroke-width="1.3"/></svg>
<svg style="left:1268.5px;top:77.0px" width="3" height="11" viewBox="0 0 3 11"><circle cx="1.5" cy="1.5" r="1.25" fill="#a0a0a0"/><circle cx="1.5" cy="5.5" r="1.25" fill="#a0a0a0"/><circle cx="1.5" cy="9.5" r="1.25" fill="#a0a0a0"/></svg>
<div class="a" style="left:1055px;top:92px;width:229px;height:20px;background:#2d2d2d;"></div>
<svg style="left:1061.5px;top:96px" width="12" height="12" viewBox="0 0 12 12"><path d="M6 0V12M0 6H12" stroke="#c4c4c4" stroke-width="1.7"/></svg>
<svg style="left:1078.0px;top:100.0px" width="8" height="5" viewBox="0 0 8 5"><path d="M0 0H8L4.0 5Z" fill="#b4b4b4"/></svg>
<div class="a" style="left:1101px;top:94px;width:65px;height:16px;background:#222222;border:1px solid #191919;border-top-color:#0d0d0d;border-radius:3px"></div>
<svg style="left:1106px;top:98.5px" width="8" height="9" viewBox="0 0 8 9"><circle cx="3" cy="3" r="2.2" fill="none" stroke="#b4b4b4" stroke-width="1.2"/><path d="M4.8 4.8L7 7.2" stroke="#b4b4b4" stroke-width="1.3"/></svg>
<svg style="left:1168px;top:96.5px" width="12" height="12" viewBox="0 0 12 12"><path d="M3.2 0.6H11.4V8.8H3.2Z" fill="none" stroke="#b4b4b4" stroke-width="1.1"/><path d="M0.6 7.2H4.8V11.4H0.6Z" fill="#222222" stroke="#b4b4b4" stroke-width="1.1"/><path d="M5.4 6.6L9.4 2.6M6.6 2.4H9.6V5.4" fill="none" stroke="#b4b4b4" stroke-width="1.1"/></svg>
<div class="a" style="left:1185px;top:92px;width:1px;height:20px;background:#232323;"></div>
<div class="a" style="left:1186px;top:92px;width:25px;height:20px;background:#313131;"></div>
<div class="a" style="left:1211px;top:92px;width:1px;height:20px;background:#232323;"></div>
<div class="a" style="left:1212px;top:92px;width:25px;height:20px;background:#313131;"></div>
<div class="a" style="left:1237px;top:92px;width:1px;height:20px;background:#232323;"></div>
<div class="a" style="left:1238px;top:92px;width:25px;height:20px;background:#313131;"></div>
<div class="a" style="left:1263px;top:92px;width:1px;height:20px;background:#232323;"></div>
<div class="a" style="left:1264px;top:92px;width:21px;height:20px;background:#313131;"></div>
<svg style="left:1191px;top:95px" width="14" height="14" viewBox="0 0 14 14"><rect x="2" y="0.5" width="5.5" height="5" fill="#a4a4a4"/><path d="M10 3L13.5 9H6.5Z" fill="#a4a4a4"/><circle cx="4.2" cy="10.4" r="3.4" fill="#a4a4a4"/></svg>
<svg style="left:1217px;top:96px" width="13" height="12" viewBox="0 0 13 12"><path d="M0.8 7.2L6.6 1.4L11.6 0.8L11.2 6L5.4 11.6Z" fill="#a4a4a4"/><circle cx="9.2" cy="3.2" r="1" fill="#313131"/></svg>
<svg style="left:1243px;top:95.5px" width="13" height="13" viewBox="0 0 13 13"><path d="M6.5 0.6L8.3 4.6L12.6 5L9.4 7.9L10.3 12.2L6.5 10L2.7 12.2L3.6 7.9L0.4 5L4.7 4.6Z" fill="#7e7e7e"/></svg>
<svg style="left:1267.5px;top:96px" width="16" height="12" viewBox="0 0 16 12"><path d="M0.8 6C3 2 13 2 15.2 6C13 10 3 10 0.8 6Z" fill="none" stroke="#a4a4a4" stroke-width="1.2"/><circle cx="8" cy="6" r="2" fill="#a4a4a4"/><path d="M2.5 11.5L13.5 0.5" stroke="#a4a4a4" stroke-width="1.3"/></svg>
<div class="a" style="left:1055px;top:112px;width:229px;height:1px;background:#1c1c1c;"></div>
<div class="a" style="left:1055px;top:113px;width:112px;height:905px;background:#2d2d2d;"></div>
<div class="a" style="left:1167px;top:113px;width:1px;height:905px;background:#1b1b1b;"></div>
<div class="a" style="left:1168px;top:113px;width:116px;height:905px;background:#2d2d2d;"></div>
<svg style="left:1060.5px;top:117.0px" width="6" height="8" viewBox="0 0 6 8"><path d="M0 0V8L6 4.0Z" fill="#5a5a5a"/></svg>
<svg style="left:1073px;top:114.5px" width="13" height="13" viewBox="0 0 13 13"><path d="M6.5 0.6L8.3 4.6L12.6 5L9.4 7.9L10.3 12.2L6.5 10L2.7 12.2L3.6 7.9L0.4 5L4.7 4.6Z" fill="#bcbcbc"/></svg>
<div class="t b" style="left:1090px;top:113px;font-size:12.5px;letter-spacing:-0.07px;color:#b0b0b0">Favorites</div>
<div class="a" style="left:1055px;top:144px;width:112px;height:16px;background:#3d3d3d;"></div>
<svg style="left:1060.5px;top:148.0px" width="6" height="8" viewBox="0 0 6 8"><path d="M0 0V8L6 4.0Z" fill="#5a5a5a"/></svg>
<svg style="left:1072.5px;top:146.5px" width="13" height="11" viewBox="0 0 13 11"><path d="M0.5 1.2Q0.5 0.5 1.2 0.5H4.6L5.8 2.2H11.8Q12.5 2.2 12.5 2.9V9.8Q12.5 10.5 11.8 10.5H1.2Q0.5 10.5 0.5 9.8Z" fill="#b0b0b0"/></svg>
<div class="t b" style="left:1090px;top:144px;font-size:12.5px;letter-spacing:0.00px;color:#b0b0b0">Assets</div>
<svg style="left:1060.5px;top:164.0px" width="6" height="8" viewBox="0 0 6 8"><path d="M0 0V8L6 4.0Z" fill="#5a5a5a"/></svg>
<svg style="left:1072.5px;top:162.5px" width="13" height="11" viewBox="0 0 13 11"><path d="M0.5 1.2Q0.5 0.5 1.2 0.5H4.6L5.8 2.2H11.8Q12.5 2.2 12.5 2.9V9.8Q12.5 10.5 11.8 10.5H1.2Q0.5 10.5 0.5 9.8Z" fill="#b0b0b0"/></svg>
<div class="t b" style="left:1090px;top:160px;font-size:12.5px;letter-spacing:-0.03px;color:#b0b0b0">Packages</div>
<div class="a" style="left:1168px;top:113px;width:116px;height:20px;background:#333333;border-bottom:1px solid #242424"></div>
<div class="t b" style="left:1172.5px;top:114.5px;font-size:12.5px;letter-spacing:0.00px;color:#a6a6a6">Assets</div>
<svg style="left:1221px;top:118px" width="5" height="9" viewBox="0 0 5 9"><path d="M0.6 0.6L4.4 4.5L0.6 8.4" fill="none" stroke="#7e7e7e" stroke-width="1.2"/></svg>
<svg style="left:1201px;top:155.5px" width="48" height="41" viewBox="0 0 48 41"><path d="M0 3Q0 0 3 0H19Q21 0 22 1.6L25.5 7.6H45Q48 7.6 48 10.6V38Q48 41 45 41H3Q0 41 0 38Z" fill="#9e9e9e"/></svg>
<div class="t" style="left:1205.75px;top:208.8px;font-size:10.3px;letter-spacing:0.33px;color:#a6a6a6">Prefabs</div>
<svg style="left:1201px;top:248.5px" width="48" height="41" viewBox="0 0 48 41"><path d="M0 3Q0 0 3 0H19Q21 0 22 1.6L25.5 7.6H45Q48 7.6 48 10.6V38Q48 41 45 41H3Q0 41 0 38Z" fill="#9e9e9e"/></svg>
<div class="t" style="left:1207.0px;top:301.8px;font-size:10.3px;letter-spacing:0.13px;color:#a6a6a6">Scenes</div>
<svg style="left:1201px;top:341.5px" width="48" height="41" viewBox="0 0 48 41"><path d="M0 3Q0 0 3 0H19Q21 0 22 1.6L25.5 7.6H45Q48 7.6 48 10.6V38Q48 41 45 41H3Q0 41 0 38Z" fill="#9e9e9e"/></svg>
<div class="t" style="left:1208.0px;top:394.8px;font-size:10.3px;letter-spacing:0.25px;color:#a6a6a6">Scripts</div>
<div class="a" style="left:1168px;top:997px;width:116px;height:21px;background:#333333;border-top:1px solid #232323"></div>
<div class="a" style="left:1212px;top:1007.5px;width:56px;height:1px;background:#555555;"></div>
<div class="a" style="left:1239px;top:1003px;width:10px;height:10px;background:#8e8e8e;border-radius:50%"></div>
<!-- insp -->
<div class="a" style="left:1284px;top:73px;width:2px;height:945px;background:#141414;"></div>
<div class="a" style="left:1286px;top:73px;width:634px;height:19px;background:#202020;"></div>
<div class="a" style="left:1288px;top:73px;width:90px;height:19px;background:#2d2d2d;border-radius:3px 3px 0 0"></div>
<svg style="left:1293.5px;top:77px" width="11" height="11" viewBox="0 0 11 11"><circle cx="5.5" cy="5.5" r="5.5" fill="#b4b4b4"/><path d="M5.5 4.6V8.6" stroke="#2d2d2d" stroke-width="1.5"/><circle cx="5.5" cy="2.8" r="0.9" fill="#2d2d2d"/></svg>
<div class="t" style="left:1309px;top:76px;font-size:12.5px;letter-spacing:0.07px;">Inspector</div>
<svg style="left:1883.5px;top:76px" width="10" height="12" viewBox="0 0 10 12"><path d="M2.5 6V3.3a2.5 2.5 0 0 1 5 0V3.8" fill="none" stroke="#b4b4b4" stroke-width="1.3"/><rect x="0.8" y="6" width="8.4" height="5.2" fill="none" stroke="#b4b4b4" stroke-width="1.3"/></svg>
<svg style="left:1904.5px;top:77.0px" width="3" height="11" viewBox="0 0 3 11"><circle cx="1.5" cy="1.5" r="1.25" fill="#a0a0a0"/><circle cx="1.5" cy="5.5" r="1.25" fill="#a0a0a0"/><circle cx="1.5" cy="9.5" r="1.25" fill="#a0a0a0"/></svg>
<div class="a" style="left:1286px;top:92px;width:634px;height:926px;background:#2d2d2d;"></div>
<div class="a" style="left:1908px;top:92px;width:12px;height:926px;background:#2a2a2a;border-left:1px solid #232323"></div>
<svg style="left:1910px;top:97px" width="8" height="5" viewBox="0 0 8 5"><path d="M0 5H8L4 0Z" fill="#8c8c8c"/></svg>
<svg style="left:1910px;top:1008px" width="8" height="5" viewBox="0 0 8 5"><path d="M0 0H8L4 5Z" fill="#8c8c8c"/></svg>
<div class="a" style="left:1910px;top:107px;width:8px;height:860px;background:#474747;border-radius:4px"></div>
<svg style="left:1293px;top:102px" width="22" height="25" viewBox="0 0 22 25"><path d="M10 1L19 5.8V16L10 21L1 16V5.8ZM1 5.8L10 10.6L19 5.8M10 10.6V21" fill="none" stroke="#b0b0b0" stroke-width="1.4" stroke-linejoin="round"/><path d="M16.6 21H23.4L20 24.8Z" fill="#b0b0b0"/></svg>
<div class="cb" style="left:1331px;top:103px;width:14px;height:14px"></div><svg style="left:1331.5px;top:103.5px" width="13" height="13" viewBox="0 0 13 13"><path d="M3 6.8L5.4 9.2L10.2 3.6" fill="none" stroke="#c0c0c0" stroke-width="1.7" stroke-linecap="square"/></svg>
<div class="fld" style="left:1351px;top:101px;width:475px;height:18px;line-height:17.5px;color:#c0c0c0;font-size:13px">Player(Clone)</div>
<div class="cb" style="left:1830px;top:103.5px;width:14px;height:14px"></div>
<div class="t" style="left:1848px;top:102.5px;font-size:12.5px;letter-spacing:0.15px;">Static</div>
<svg style="left:1892.5px;top:108.5px" width="8" height="5" viewBox="0 0 8 5"><path d="M0 0H8L4.0 5Z" fill="#a0a0a0"/></svg>
<div class="t" style="left:1327px;top:126.5px;">Tag</div>
<div class="a" style="left:1354px;top:126px;width:253px;height:17px;background:#3f3f3f;border-radius:3px;border:1px solid #2a2a2a"></div>
<div class="t" style="left:1357px;top:125.5px;font-size:12.5px;letter-spacing:-0.03px;">Untagged</div>
<svg style="left:1593.5px;top:132.0px" width="8" height="5" viewBox="0 0 8 5"><path d="M0 0H8L4.0 5Z" fill="#a0a0a0"/></svg>
<div class="t" style="left:1622px;top:126.5px;font-size:12.5px;letter-spacing:-0.07px;">Layer</div>
<div class="a" style="left:1659px;top:126px;width:243px;height:17px;background:#3f3f3f;border-radius:3px;border:1px solid #2a2a2a"></div>
<div class="t" style="left:1662px;top:125.5px;font-size:12.5px;letter-spacing:0.23px;">Default</div>
<svg style="left:1888.5px;top:132.0px" width="8" height="5" viewBox="0 0 8 5"><path d="M0 0H8L4.0 5Z" fill="#a0a0a0"/></svg>
<div class="hdr" style="top:151px"></div><svg style="left:1291.5px;top:158.75px" width="9" height="6.5" viewBox="0 0 9 6.5"><path d="M0 0H9L4.5 6.5Z" fill="#585858"/></svg><svg style="left:1306.5px;top:155px" width="13" height="13" viewBox="0 0 13 13"><path d="M6.5 7V1.2" stroke="#8ad04a" stroke-width="1.5"/><path d="M6.5 7L1.4 11" stroke="#e05a3c" stroke-width="1.5"/><path d="M6.5 7L11.6 11" stroke="#4a90e0" stroke-width="1.5"/><path d="M6.5 0L8.2 2.6H4.8Z" fill="#8ad04a"/><path d="M0.4 12L1 9.2L3 11.4Z" fill="#e05a3c"/><path d="M12.6 12L12 9.2L10 11.4Z" fill="#4a90e0"/></svg><div class="t b" style="left:1345px;top:154.9px;font-size:12.5px;letter-spacing:-0.02px;color:#b6b6b6">Transform</div><svg style="left:1847.5px;top:155.5px" width="13" height="13" viewBox="0 0 13 13"><circle cx="6.5" cy="6.5" r="6" fill="#a6a6a6"/><path d="M4.6 5.2A1.9 1.9 0 1 1 7.4 6.8C6.7 7.3 6.5 7.5 6.5 8.3" fill="none" stroke="#333333" stroke-width="1.4"/><circle cx="6.5" cy="10.2" r="0.9" fill="#333333"/></svg><svg style="left:1867px;top:156px" width="14" height="12" viewBox="0 0 14 12"><path d="M0 2.5H14M0 9.5H14" stroke="#a6a6a6" stroke-width="1.3"/><path d="M9.5 0V5M4.5 7V12" stroke="#a6a6a6" stroke-width="1.6"/><path d="M9.5 0V5M4.5 7V12" stroke="#333333" stroke-width="0" /></svg><svg style="left:1892.5px;top:156.5px" width="3" height="11" viewBox="0 0 3 11"><circle cx="1.5" cy="1.5" r="1.25" fill="#a6a6a6"/><circle cx="1.5" cy="5.5" r="1.25" fill="#a6a6a6"/><circle cx="1.5" cy="9.5" r="1.25" fill="#a6a6a6"/></svg>
<div class="t" style="left:1304px;top:178.8px;font-size:12.5px;letter-spacing:0.00px;">Position</div>
<div class="t" style="left:1552px;top:178.8px;">X</div><div class="fld" style="left:1566px;top:177.5px;width:99.5px">3.219239</div><div class="t" style="left:1671.5px;top:178.8px;">Y</div><div class="fld" style="left:1685px;top:177.5px;width:99.5px">1.049568</div><div class="t" style="left:1789px;top:178.8px;">Z</div><div class="fld" style="left:1803.5px;top:177.5px;width:98.5px">-0.8102978</div>
<div class="t" style="left:1304px;top:198.8px;font-size:12.5px;letter-spacing:-0.01px;">Rotation</div>
<div class="t" style="left:1552px;top:198.8px;">X</div><div class="fld" style="left:1566px;top:197.5px;width:99.5px">0</div><div class="t" style="left:1671.5px;top:198.8px;">Y</div><div class="fld" style="left:1685px;top:197.5px;width:99.5px">0</div><div class="t" style="left:1789px;top:198.8px;">Z</div><div class="fld" style="left:1803.5px;top:197.5px;width:98.5px">0</div>
<div class="t" style="left:1304px;top:218.8px;font-size:12.5px;letter-spacing:0.05px;">Scale</div>
<div class="t" style="left:1552px;top:218.8px;">X</div><div class="fld" style="left:1566px;top:217.5px;width:99.5px">1</div><div class="t" style="left:1671.5px;top:218.8px;">Y</div><div class="fld" style="left:1685px;top:217.5px;width:99.5px">1</div><div class="t" style="left:1789px;top:218.8px;">Z</div><div class="fld" style="left:1803.5px;top:217.5px;width:98.5px">1</div>
<svg style="left:1529px;top:221.5px" width="14" height="10" viewBox="0 0 14 10"><path d="M4.2 2.4H3.4A2.6 2.6 0 0 0 3.4 7.6H5.4M8.6 2.4H10.6A2.6 2.6 0 0 1 10.6 7.6H9.8M5 5H9" fill="none" stroke="#a0a0a0" stroke-width="1.2"/><path d="M2.5 0.5L11.5 9.5" stroke="#a0a0a0" stroke-width="1.1"/></svg>
<div class="hdr" style="top:244px"></div><svg style="left:1291.5px;top:251.75px" width="9" height="6.5" viewBox="0 0 9 6.5"><path d="M0 0H9L4.5 6.5Z" fill="#585858"/></svg><svg style="left:1307px;top:247.5px" width="12" height="15" viewBox="0 0 12 15"><path d="M0.5 1.5Q0.5 0.5 1.5 0.5H8L11.5 4V13.5Q11.5 14.5 10.5 14.5H1.5Q0.5 14.5 0.5 13.5Z" fill="#d7e0da"/><path d="M8 0.5V4H11.5Z" fill="#9fb3a6"/><path d="M4.4 5V12M7.4 5V12M2.4 7.2H9.6M2.4 10H9.6" stroke="#2f8a4c" stroke-width="1.1"/></svg><div class="t b" style="left:1345px;top:247.9px;font-size:12.5px;letter-spacing:-0.02px;color:#b6b6b6">NetworkObject</div><svg style="left:1847.5px;top:248.5px" width="13" height="13" viewBox="0 0 13 13"><circle cx="6.5" cy="6.5" r="6" fill="#a6a6a6"/><path d="M4.6 5.2A1.9 1.9 0 1 1 7.4 6.8C6.7 7.3 6.5 7.5 6.5 8.3" fill="none" stroke="#333333" stroke-width="1.4"/><circle cx="6.5" cy="10.2" r="0.9" fill="#333333"/></svg><svg style="left:1867px;top:249px" width="14" height="12" viewBox="0 0 14 12"><path d="M0 2.5H14M0 9.5H14" stroke="#a6a6a6" stroke-width="1.3"/><path d="M9.5 0V5M4.5 7V12" stroke="#a6a6a6" stroke-width="1.6"/><path d="M9.5 0V5M4.5 7V12" stroke="#333333" stroke-width="0" /></svg><svg style="left:1892.5px;top:249.5px" width="3" height="11" viewBox="0 0 3 11"><circle cx="1.5" cy="1.5" r="1.25" fill="#a6a6a6"/><circle cx="1.5" cy="5.5" r="1.25" fill="#a6a6a6"/><circle cx="1.5" cy="9.5" r="1.25" fill="#a6a6a6"/></svg>
<div class="t dis" style="left:1304px;top:271.8px;font-size:12.5px;letter-spacing:0.01px;">GlobalObjectIdHash</div>
<div class="fld dis" style="left:1551px;top:270.5px;width:351px">1960825305</div>
<div class="t dis" style="left:1304px;top:291.8px;font-size:12.5px;letter-spacing:0.19px;">NetworkObjectId</div>
<div class="fld dis" style="left:1551px;top:290.5px;width:351px">1</div>
<div class="t dis" style="left:1304px;top:311.8px;font-size:12.5px;letter-spacing:0.07px;">OwnerClientId</div>
<div class="fld dis" style="left:1551px;top:310.5px;width:351px">0</div>
<div class="t dis" style="left:1304px;top:331.8px;font-size:12.5px;letter-spacing:0.02px;">IsSpawned</div>
<div class="cb dis" style="left:1551px;top:332.5px;width:14px;height:14px"></div><svg style="left:1551.5px;top:333.0px" width="13" height="13" viewBox="0 0 13 13"><path d="M3 6.8L5.4 9.2L10.2 3.6" fill="none" stroke="#8a8a8a" stroke-width="1.7" stroke-linecap="square"/></svg>
<div class="t dis" style="left:1304px;top:351.8px;font-size:12.5px;letter-spacing:0.08px;">IsLocalPlayer</div>
<div class="cb dis" style="left:1551px;top:352.5px;width:14px;height:14px"></div><svg style="left:1551.5px;top:353.0px" width="13" height="13" viewBox="0 0 13 13"><path d="M3 6.8L5.4 9.2L10.2 3.6" fill="none" stroke="#8a8a8a" stroke-width="1.7" stroke-linecap="square"/></svg>
<div class="t dis" style="left:1304px;top:371.8px;font-size:12.5px;letter-spacing:-0.09px;">IsOwner</div>
<div class="cb dis" style="left:1551px;top:372.5px;width:14px;height:14px"></div><svg style="left:1551.5px;top:373.0px" width="13" height="13" viewBox="0 0 13 13"><path d="M3 6.8L5.4 9.2L10.2 3.6" fill="none" stroke="#8a8a8a" stroke-width="1.7" stroke-linecap="square"/></svg>
<div class="t dis" style="left:1304px;top:391.8px;font-size:12.5px;letter-spacing:0.02px;">IsOwnedByServer</div>
<div class="cb dis" style="left:1551px;top:392.5px;width:14px;height:14px"></div><svg style="left:1551.5px;top:393.0px" width="13" height="13" viewBox="0 0 13 13"><path d="M3 6.8L5.4 9.2L10.2 3.6" fill="none" stroke="#8a8a8a" stroke-width="1.7" stroke-linecap="square"/></svg>
<div class="t dis" style="left:1304px;top:411.8px;font-size:12.5px;letter-spacing:0.06px;">IsPlayerObject</div>
<div class="cb dis" style="left:1551px;top:412.5px;width:14px;height:14px"></div><svg style="left:1551.5px;top:413.0px" width="13" height="13" viewBox="0 0 13 13"><path d="M3 6.8L5.4 9.2L10.2 3.6" fill="none" stroke="#8a8a8a" stroke-width="1.7" stroke-linecap="square"/></svg>
<div class="t dis" style="left:1304px;top:431.8px;font-size:12.5px;letter-spacing:0.06px;">IsSceneObject</div>
<div class="cb dis" style="left:1551px;top:432.5px;width:14px;height:14px"></div>
<div class="t dis" style="left:1304px;top:451.8px;font-size:12.5px;letter-spacing:0.10px;">DestroyWithScene</div>
<div class="cb dis" style="left:1551px;top:452.5px;width:14px;height:14px"></div>
<div class="t dis" style="left:1304px;top:471.8px;font-size:12.5px;letter-spacing:0.22px;">NetworkManager</div>
<div class="fld dis" style="left:1551px;top:470.5px;width:351px">NetWorkManager</div>
<svg style="left:1294.0px;top:495.5px" width="6" height="8" viewBox="0 0 6 8"><path d="M0 0V8L6 4.0Z" fill="#5c5c5c"/></svg>
<div class="t" style="left:1304px;top:491.8px;font-size:12.5px;letter-spacing:-0.08px;">Observers</div>
<div class="hdr" style="top:515px"></div><svg style="left:1291.5px;top:522.75px" width="9" height="6.5" viewBox="0 0 9 6.5"><path d="M0 0H9L4.5 6.5Z" fill="#585858"/></svg><svg style="left:1307px;top:518.5px" width="12" height="15" viewBox="0 0 12 15"><path d="M0.5 1.5Q0.5 0.5 1.5 0.5H8L11.5 4V13.5Q11.5 14.5 10.5 14.5H1.5Q0.5 14.5 0.5 13.5Z" fill="#d7e0da"/><path d="M8 0.5V4H11.5Z" fill="#9fb3a6"/><path d="M4.4 5V12M7.4 5V12M2.4 7.2H9.6M2.4 10H9.6" stroke="#2f8a4c" stroke-width="1.1"/></svg><div class="cb" style="left:1325px;top:519px;width:14px;height:14px"></div><svg style="left:1325.5px;top:519.5px" width="13" height="13" viewBox="0 0 13 13"><path d="M3 6.8L5.4 9.2L10.2 3.6" fill="none" stroke="#c0c0c0" stroke-width="1.7" stroke-linecap="square"/></svg><div class="t b" style="left:1345px;top:518.9px;font-size:12.5px;letter-spacing:0.04px;color:#b6b6b6">NetworkTransform</div><svg style="left:1847.5px;top:519.5px" width="13" height="13" viewBox="0 0 13 13"><circle cx="6.5" cy="6.5" r="6" fill="#a6a6a6"/><path d="M4.6 5.2A1.9 1.9 0 1 1 7.4 6.8C6.7 7.3 6.5 7.5 6.5 8.3" fill="none" stroke="#333333" stroke-width="1.4"/><circle cx="6.5" cy="10.2" r="0.9" fill="#333333"/></svg><svg style="left:1867px;top:520px" width="14" height="12" viewBox="0 0 14 12"><path d="M0 2.5H14M0 9.5H14" stroke="#a6a6a6" stroke-width="1.3"/><path d="M9.5 0V5M4.5 7V12" stroke="#a6a6a6" stroke-width="1.6"/><path d="M9.5 0V5M4.5 7V12" stroke="#333333" stroke-width="0" /></svg><svg style="left:1892.5px;top:520.5px" width="3" height="11" viewBox="0 0 3 11"><circle cx="1.5" cy="1.5" r="1.25" fill="#a6a6a6"/><circle cx="1.5" cy="5.5" r="1.25" fill="#a6a6a6"/><circle cx="1.5" cy="9.5" r="1.25" fill="#a6a6a6"/></svg>
<div class="t b" style="left:1304px;top:542.8px;font-size:12.5px;letter-spacing:-0.44px;">Syncing</div>
<div class="t" style="left:1304px;top:562.8px;font-size:12.5px;letter-spacing:0.00px;">Position</div>
<div class="cb" style="left:1551px;top:563.5px;width:14px;height:14px"></div><svg style="left:1551.5px;top:564.0px" width="13" height="13" viewBox="0 0 13 13"><path d="M3 6.8L5.4 9.2L10.2 3.6" fill="none" stroke="#c0c0c0" stroke-width="1.7" stroke-linecap="square"/></svg>
<div class="t" style="left:1569px;top:562.8px;">X</div>
<div class="cb" style="left:1596px;top:563.5px;width:14px;height:14px"></div><svg style="left:1596.5px;top:564.0px" width="13" height="13" viewBox="0 0 13 13"><path d="M3 6.8L5.4 9.2L10.2 3.6" fill="none" stroke="#c0c0c0" stroke-width="1.7" stroke-linecap="square"/></svg>
<div class="t" style="left:1614px;top:562.8px;">Y</div>
<div class="cb" style="left:1641px;top:563.5px;width:14px;height:14px"></div><svg style="left:1641.5px;top:564.0px" width="13" height="13" viewBox="0 0 13 13"><path d="M3 6.8L5.4 9.2L10.2 3.6" fill="none" stroke="#c0c0c0" stroke-width="1.7" stroke-linecap="square"/></svg>
<div class="t" style="left:1659px;top:562.8px;">Z</div>
<div class="t" style="left:1304px;top:582.8px;font-size:12.5px;letter-spacing:-0.01px;">Rotation</div>
<div class="cb" style="left:1551px;top:583.5px;width:14px;height:14px"></div><svg style="left:1551.5px;top:584.0px" width="13" height="13" viewBox="0 0 13 13"><path d="M3 6.8L5.4 9.2L10.2 3.6" fill="none" stroke="#c0c0c0" stroke-width="1.7" stroke-linecap="square"/></svg>
<div class="t" style="left:1569px;top:582.8px;">X</div>
<div class="cb" style="left:1596px;top:583.5px;width:14px;height:14px"></div><svg style="left:1596.5px;top:584.0px" width="13" height="13" viewBox="0 0 13 13"><path d="M3 6.8L5.4 9.2L10.2 3.6" fill="none" stroke="#c0c0c0" stroke-width="1.7" stroke-linecap="square"/></svg>
<div class="t" style="left:1614px;top:582.8px;">Y</div>
<div class="cb" style="left:1641px;top:583.5px;width:14px;height:14px"></div><svg style="left:1641.5px;top:584.0px" width="13" height="13" viewBox="0 0 13 13"><path d="M3 6.8L5.4 9.2L10.2 3.6" fill="none" stroke="#c0c0c0" stroke-width="1.7" stroke-linecap="square"/></svg>
<div class="t" style="left:1659px;top:582.8px;">Z</div>
<div class="t" style="left:1304px;top:602.8px;font-size:12.5px;letter-spacing:0.05px;">Scale</div>
<div class="cb" style="left:1551px;top:603.5px;width:14px;height:14px"></div><svg style="left:1551.5px;top:604.0px" width="13" height="13" viewBox="0 0 13 13"><path d="M3 6.8L5.4 9.2L10.2 3.6" fill="none" stroke="#c0c0c0" stroke-width="1.7" stroke-linecap="square"/></svg>
<div class="t" style="left:1569px;top:602.8px;">X</div>
<div class="cb" style="left:1596px;top:603.5px;width:14px;height:14px"></div><svg style="left:1596.5px;top:604.0px" width="13" height="13" viewBox="0 0 13 13"><path d="M3 6.8L5.4 9.2L10.2 3.6" fill="none" stroke="#c0c0c0" stroke-width="1.7" stroke-linecap="square"/></svg>
<div class="t" style="left:1614px;top:602.8px;">Y</div>
<div class="cb" style="left:1641px;top:603.5px;width:14px;height:14px"></div><svg style="left:1641.5px;top:604.0px" width="13" height="13" viewBox="0 0 13 13"><path d="M3 6.8L5.4 9.2L10.2 3.6" fill="none" stroke="#c0c0c0" stroke-width="1.7" stroke-linecap="square"/></svg>
<div class="t" style="left:1659px;top:602.8px;">Z</div>
<div class="t b" style="left:1304px;top:630.8px;font-size:12.5px;letter-spacing:-0.26px;">Thresholds</div>
<div class="t" style="left:1304px;top:650.8px;font-size:12.5px;letter-spacing:0.04px;">Position Threshold</div>
<div class="fld" style="left:1551px;top:649.5px;width:351px">0.001</div>
<div class="t" style="left:1304px;top:670.8px;font-size:12.5px;letter-spacing:-0.00px;">Rot Angle Threshold</div>
<div class="fld" style="left:1551px;top:669.5px;width:351px">0.01</div>
<div class="t" style="left:1304px;top:690.8px;font-size:12.5px;letter-spacing:0.06px;">Scale Threshold</div>
<div class="fld" style="left:1551px;top:689.5px;width:351px">0.01</div>
<div class="t b" style="left:1304px;top:718.8px;font-size:12.5px;letter-spacing:-0.22px;">Configurations</div>
<div class="t" style="left:1304px;top:738.8px;font-size:12.5px;letter-spacing:0.02px;">In Local Space</div>
<div class="cb" style="left:1551px;top:739.5px;width:14px;height:14px"></div>
<div class="t" style="left:1304px;top:758.8px;font-size:12.5px;letter-spacing:0.09px;">Interpolate</div>
<div class="cb" style="left:1551px;top:759.5px;width:14px;height:14px"></div><svg style="left:1551.5px;top:760.0px" width="13" height="13" viewBox="0 0 13 13"><path d="M3 6.8L5.4 9.2L10.2 3.6" fill="none" stroke="#c0c0c0" stroke-width="1.7" stroke-linecap="square"/></svg>
<div class="hdr" style="top:784px"></div><svg style="left:1291.5px;top:791.75px" width="9" height="6.5" viewBox="0 0 9 6.5"><path d="M0 0H9L4.5 6.5Z" fill="#585858"/></svg><svg style="left:1306px;top:787px" width="14" height="16" viewBox="0 0 14 16"><rect x="4" y="0.5" width="6" height="13" rx="3" fill="#7ed348"/><path d="M2.2 2.5H0.6V13.4H2.8M11.8 2.5H13.4V13.4H11.2" fill="none" stroke="#7ed348" stroke-width="1.2"/><path d="M4.6 11.6L7 15.4L9.4 11.6Z" fill="#c8c8c8"/></svg><div class="cb" style="left:1325px;top:788px;width:14px;height:14px"></div><svg style="left:1325.5px;top:788.5px" width="13" height="13" viewBox="0 0 13 13"><path d="M3 6.8L5.4 9.2L10.2 3.6" fill="none" stroke="#c0c0c0" stroke-width="1.7" stroke-linecap="square"/></svg><div class="t b" style="left:1345px;top:787.9px;font-size:12.5px;letter-spacing:-0.08px;color:#b6b6b6">Character Controller</div><svg style="left:1847.5px;top:788.5px" width="13" height="13" viewBox="0 0 13 13"><circle cx="6.5" cy="6.5" r="6" fill="#a6a6a6"/><path d="M4.6 5.2A1.9 1.9 0 1 1 7.4 6.8C6.7 7.3 6.5 7.5 6.5 8.3" fill="none" stroke="#333333" stroke-width="1.4"/><circle cx="6.5" cy="10.2" r="0.9" fill="#333333"/></svg><svg style="left:1867px;top:789px" width="14" height="12" viewBox="0 0 14 12"><path d="M0 2.5H14M0 9.5H14" stroke="#a6a6a6" stroke-width="1.3"/><path d="M9.5 0V5M4.5 7V12" stroke="#a6a6a6" stroke-width="1.6"/><path d="M9.5 0V5M4.5 7V12" stroke="#333333" stroke-width="0" /></svg><svg style="left:1892.5px;top:789.5px" width="3" height="11" viewBox="0 0 3 11"><circle cx="1.5" cy="1.5" r="1.25" fill="#a6a6a6"/><circle cx="1.5" cy="5.5" r="1.25" fill="#a6a6a6"/><circle cx="1.5" cy="9.5" r="1.25" fill="#a6a6a6"/></svg>
<div class="t" style="left:1304px;top:811.8px;font-size:12.5px;letter-spacing:0.02px;">Slope Limit</div>
<div class="fld" style="left:1551px;top:810.5px;width:351px">45</div>
<div class="t" style="left:1304px;top:831.8px;font-size:12.5px;letter-spacing:0.07px;">Step Offset</div>
<div class="fld" style="left:1551px;top:830.5px;width:351px">0.3</div>
<div class="t" style="left:1304px;top:851.8px;font-size:12.5px;letter-spacing:0.03px;">Skin Width</div>
<div class="fld" style="left:1551px;top:850.5px;width:351px">0.08</div>
<div class="t" style="left:1304px;top:871.8px;font-size:12.5px;letter-spacing:0.17px;">Min Move Distance</div>
<div class="fld" style="left:1551px;top:870.5px;width:351px">0.001</div>
<div class="t" style="left:1304px;top:891.8px;font-size:12.5px;letter-spacing:0.09px;">Center</div>
<div class="t" style="left:1552px;top:891.8px;">X</div><div class="fld" style="left:1566px;top:890.5px;width:99.5px">0</div><div class="t" style="left:1671.5px;top:891.8px;">Y</div><div class="fld" style="left:1685px;top:890.5px;width:99.5px">0</div><div class="t" style="left:1789px;top:891.8px;">Z</div><div class="fld" style="left:1803.5px;top:890.5px;width:98.5px">0</div>
<div class="t" style="left:1304px;top:911.8px;font-size:12.5px;letter-spacing:-0.18px;">Radius</div>
<div class="fld" style="left:1551px;top:910.5px;width:351px">0.5</div>
<div class="t" style="left:1304px;top:931.8px;font-size:12.5px;letter-spacing:0.17px;">Height</div>
<div class="fld" style="left:1551px;top:930.5px;width:351px">2</div>
<div class="hdr" style="top:957px"></div><svg style="left:1291.5px;top:964.75px" width="9" height="6.5" viewBox="0 0 9 6.5"><path d="M0 0H9L4.5 6.5Z" fill="#585858"/></svg><svg style="left:1307px;top:960.5px" width="12" height="15" viewBox="0 0 12 15"><path d="M0.5 1.5Q0.5 0.5 1.5 0.5H8L11.5 4V13.5Q11.5 14.5 10.5 14.5H1.5Q0.5 14.5 0.5 13.5Z" fill="#d7e0da"/><path d="M8 0.5V4H11.5Z" fill="#9fb3a6"/><path d="M4.4 5V12M7.4 5V12M2.4 7.2H9.6M2.4 10H9.6" stroke="#2f8a4c" stroke-width="1.1"/></svg><div class="cb" style="left:1325px;top:961px;width:14px;height:14px"></div><svg style="left:1325.5px;top:961.5px" width="13" height="13" viewBox="0 0 13 13"><path d="M3 6.8L5.4 9.2L10.2 3.6" fill="none" stroke="#c0c0c0" stroke-width="1.7" stroke-linecap="square"/></svg><div class="t b" style="left:1345px;top:960.9px;font-size:12.5px;letter-spacing:0.02px;color:#b6b6b6">Player Movement (Script)</div><svg style="left:1847.5px;top:961.5px" width="13" height="13" viewBox="0 0 13 13"><circle cx="6.5" cy="6.5" r="6" fill="#a6a6a6"/><path d="M4.6 5.2A1.9 1.9 0 1 1 7.4 6.8C6.7 7.3 6.5 7.5 6.5 8.3" fill="none" stroke="#333333" stroke-width="1.4"/><circle cx="6.5" cy="10.2" r="0.9" fill="#333333"/></svg><svg style="left:1867px;top:962px" width="14" height="12" viewBox="0 0 14 12"><path d="M0 2.5H14M0 9.5H14" stroke="#a6a6a6" stroke-width="1.3"/><path d="M9.5 0V5M4.5 7V12" stroke="#a6a6a6" stroke-width="1.6"/><path d="M9.5 0V5M4.5 7V12" stroke="#333333" stroke-width="0" /></svg><svg style="left:1892.5px;top:962.5px" width="3" height="11" viewBox="0 0 3 11"><circle cx="1.5" cy="1.5" r="1.25" fill="#a6a6a6"/><circle cx="1.5" cy="5.5" r="1.25" fill="#a6a6a6"/><circle cx="1.5" cy="9.5" r="1.25" fill="#a6a6a6"/></svg>
<div class="t dis" style="left:1304px;top:984.8px;font-size:12.5px;letter-spacing:0.21px;">Script</div>
<div class="fld dis" style="left:1551px;top:983.5px;width:351px"></div>
<svg style="left:1556px;top:987.5px" width="8" height="10" viewBox="0 0 8 10"><path d="M0 1Q0 0 1 0H5.6L8 2.4V9Q8 10 7 10H1Q0 10 0 9Z" fill="#7a7a7a"/><path d="M2.8 3.4V7.6M5 3.4V7.6M1.6 4.6H6.2M1.6 6.4H6.2" stroke="#2a2a2a" stroke-width="0.7"/></svg>
<div class="t dis" style="left:1567px;top:985px;font-size:12.5px;letter-spacing:0.17px;">PlayerMovement</div>
<svg style="left:1887px;top:987px" width="11" height="11" viewBox="0 0 11 11"><circle cx="5.5" cy="5.5" r="4.8" fill="none" stroke="#6c6c6c" stroke-width="1.1"/><circle cx="5.5" cy="5.5" r="1.6" fill="#6c6c6c"/></svg>
<div class="a" style="left:1286px;top:1010px;width:622px;height:1px;background:#1a1a1a;"></div>
<div class="a" style="left:1286px;top:1011px;width:622px;height:7px;background:#333333;"></div>
<div class="a" style="left:1286px;top:1016px;width:622px;height:1px;background:#404040;"></div>
<!-- bottom -->
<div class="a" style="left:0px;top:1018px;width:1920px;height:22px;background:#161616;"></div>
<div class="a" style="left:1815.0px;top:1020px;width:23px;height:20px;background:#1e1e1e;"></div>
<div class="a" style="left:1841.5px;top:1020px;width:23px;height:20px;background:#1e1e1e;"></div>
<div class="a" style="left:1868.5px;top:1020px;width:23px;height:20px;background:#1e1e1e;"></div>
<svg style="left:1819px;top:1023px" width="15" height="15" viewBox="0 0 15 15"><ellipse cx="7.5" cy="8.5" rx="3.6" ry="4.8" fill="#9a9a9a"/><path d="M4 5.5L1.5 3M11 5.5L13.5 3M3.6 8.5H0.8M11.4 8.5H14.2M4 11.5L1.5 14M11 11.5L13.5 14M5.6 3.6A2 2 0 0 1 9.4 3.6" stroke="#9a9a9a" stroke-width="1.1" fill="none"/><path d="M1.5 14.5L13.5 1.5" stroke="#1e1e1e" stroke-width="2.4"/><path d="M1.5 14.5L13.5 1.5" stroke="#9a9a9a" stroke-width="1.1"/></svg>
<svg style="left:1846px;top:1023px" width="15" height="15" viewBox="0 0 15 15"><ellipse cx="7.5" cy="3.6" rx="5.6" ry="2.6" fill="#9a9a9a"/><path d="M1.9 6C1.9 9 13.1 9 13.1 6V8.4C13.1 11.4 1.9 11.4 1.9 8.4ZM1.9 10.6C1.9 13.6 13.1 13.6 13.1 10.6V12C13.1 15 1.9 15 1.9 12Z" fill="#9a9a9a"/><path d="M1 14.5L14 2" stroke="#1e1e1e" stroke-width="2.4"/><path d="M1 14.5L14 2" stroke="#9a9a9a" stroke-width="1.1"/></svg>
<svg style="left:1872.5px;top:1023px" width="15" height="15" viewBox="0 0 15 15"><circle cx="7.5" cy="7.5" r="5.4" fill="none" stroke="#9a9a9a" stroke-width="1.3"/><path d="M2.2 6C5 8.6 10 8.6 12.8 6M7.5 2.2C5.4 5 5.8 10 8.6 12.8" fill="none" stroke="#9a9a9a" stroke-width="1"/><path d="M0.8 2.8V0.8H2.8M12.2 0.8H14.2V2.8M0.8 12.2V14.2H2.8M12.2 14.2H14.2V12.2" fill="none" stroke="#9a9a9a" stroke-width="1.1"/><path d="M1.5 14L13.5 1.5" stroke="#1e1e1e" stroke-width="2.4"/><path d="M1.5 14L13.5 1.5" stroke="#9a9a9a" stroke-width="1.1"/></svg>
<svg style="left:1899px;top:1024px" width="14" height="14" viewBox="0 0 14 14"><circle cx="7" cy="7" r="6" fill="none" stroke="#b0b0b0" stroke-width="1.3"/><path d="M4 7.2L6.2 9.4L10.2 4.8" fill="none" stroke="#b0b0b0" stroke-width="1.4"/></svg>
<div class="a" style="left:638px;top:1028px;width:512px;height:12px;background:#ffffff;overflow:hidden"></div>
<div class="a" style="left:638px;top:1028px;width:512px;height:12px;overflow:hidden"><div class="t" style="left:9px;top:6px;color:#9c9c9c;font-size:12.5px">Hold on... (busy for 12:41)</div></div>
<div class="a" style="left:0px;top:1040px;width:1920px;height:40px;background:#d6e3ec;background:linear-gradient(90deg,#d6e3ec 0%,#d7e5ee 31%,#dcebe6 36%,#dfeee2 40%,#e3eee4 44%,#ebeceb 48%,#ebebeb 55%,#e0e7ec 59%,#d6e2eb 63%,#d4e1ea 100%)"></div>
<div class="a" style="left:247px;top:1040px;width:48px;height:40px;background:#f7b47e;"></div>
<div class="a" style="left:345px;top:1040px;width:23px;height:40px;background:#a6dd97;"></div>
<div class="a" style="left:368px;top:1040px;width:22px;height:40px;background:#d8dddf;"></div>
<div class="a" style="left:390px;top:1040px;width:1px;height:40px;background:#c2c9cd;"></div>
<div class="a" style="left:55px;top:1078px;width:40px;height:2px;background:#2579c0;"></div>
<div class="a" style="left:153px;top:1078px;width:40px;height:2px;background:#2579c0;"></div>
<div class="a" style="left:247px;top:1078px;width:48px;height:2px;background:#f0772a;"></div>
<div class="a" style="left:300px;top:1078px;width:40px;height:2px;background:#2579c0;"></div>
<div class="a" style="left:345px;top:1078px;width:45px;height:2px;background:#62d044;"></div>
<div class="a" style="left:398px;top:1078px;width:40px;height:2px;background:#2579c0;"></div>
<svg style="left:16px;top:1052px" width="16" height="16" viewBox="0 0 16 16"><path d="M0 2.3L6.5 1.4V7.6H0ZM7.4 1.3L16 0V7.6H7.4ZM0 8.4H6.5V14.6L0 13.7ZM7.4 8.4H16V16L7.4 14.7Z" fill="#000"/></svg>
<svg style="left:63px;top:1048px" width="27" height="24" viewBox="0 0 27 24"><circle cx="11.5" cy="11" r="11" fill="#e34133"/><path d="M11.5 11L2 5.5A11 11 0 0 0 9.6 21.8L14.4 13.5Z" fill="#2da94f"/><path d="M11.5 11L14.4 13.5L9.6 21.8A11 11 0 0 0 21.6 6.6H11.5Z" fill="#fbbc09"/><circle cx="11.5" cy="11" r="5" fill="#fff"/><circle cx="11.5" cy="11" r="4" fill="#4285f4"/><circle cx="18.6" cy="17.6" r="7.4" fill="#9a6450"/><text x="18.6" y="20.6" font-size="8" fill="#ead8cf" text-anchor="middle" font-family="Noto Sans CJK TC, sans-serif">何</text></svg>
<svg style="left:112px;top:1050px" width="24" height="19" viewBox="0 0 24 19"><path d="M0 2H7.5L9 3.6H24V19H0Z" fill="#f4c242"/><path d="M1.5 0.2H7V2H1.5Z" fill="#d9a521"/><path d="M0 6H24V19H0Z" fill="#fbd665"/><path d="M5.5 11H18.5V19H15V15H9V19H5.5Z" fill="#3f9ae0"/></svg>
<svg style="left:161px;top:1048px" width="24" height="24" viewBox="0 0 24 24"><rect width="24" height="24" rx="1.5" fill="#0a0a0a"/><path d="M5 9C7 5 12 4 16 6.5C13 6 10.5 6.5 9.5 8.5C12 7.6 16 8 19 10C16 9.8 14 10.2 13 11.4H18C18 16 14.6 19 11 19C7 19 4.8 16 5.6 12.6C6.6 16 9.6 17 12 16.4C13.6 16 14.6 15 15 13.6H10.6C10 11.4 10.6 10 12 9C9.4 8.4 6.6 8.4 5 9Z" fill="#e8232b"/></svg>
<svg style="left:210.3px;top:1048.6px" width="22.6" height="22.6" viewBox="0 0 24 24"><defs><linearGradient id="stm" x1="0" y1="0" x2="1" y2="1"><stop offset="0" stop-color="#15193f"/><stop offset="0.5" stop-color="#173a6c"/><stop offset="1" stop-color="#1a6f9e"/></linearGradient></defs><circle cx="12" cy="12" r="12" fill="url(#stm)"/><path d="M0.2 13.6L7 16.4A3.4 3.4 0 0 1 9 15.8L12.2 11.2A4.6 4.6 0 1 1 16.8 15.8L12.4 19A3.4 3.4 0 0 1 5.7 19.6L0.9 17.6A12 12 0 0 1 0.2 13.6Z" fill="#f4f6f8"/><circle cx="16.8" cy="11.2" r="2.9" fill="#1b4a7c"/><circle cx="16.8" cy="11.2" r="2" fill="#f4f6f8"/><circle cx="9" cy="19.2" r="2.2" fill="none" stroke="#1b4a7c" stroke-width="1"/></svg>
<svg style="left:258.5px;top:1047px" width="26" height="26" viewBox="0 0 26 26"><circle cx="12" cy="12" r="12" fill="#5660e8"/><path d="M6.2 8.4C8 7.4 9.4 7.2 9.8 7.2L10.2 8C11.4 7.8 12.6 7.8 13.8 8L14.2 7.2C14.6 7.2 16 7.4 17.8 8.4C19.4 11 19.8 14 19.6 15.8C18.2 17 16.6 17.4 16 17.4L15.2 16.2C13 17 11 17 8.8 16.2L8 17.4C7.4 17.4 5.8 17 4.4 15.8C4.2 14 4.6 11 6.2 8.4Z" fill="#fff"/><ellipse cx="9.6" cy="12.6" rx="1.5" ry="1.8" fill="#5660e8"/><ellipse cx="14.4" cy="12.6" rx="1.5" ry="1.8" fill="#5660e8"/><circle cx="18.4" cy="18.8" r="6.9" fill="#e5484d"/><text x="18.6" y="22.4" font-size="10" font-weight="bold" fill="#fff" text-anchor="middle" font-family="Liberation Sans, sans-serif">1</text></svg>
<svg style="left:310px;top:1048.5px" width="21" height="23" viewBox="0 0 21 23"><path d="M10.5 0.5L20.3 6V17L10.5 22.5L0.7 17V6Z" fill="#d9d9d9" stroke="#b8b8b8" stroke-width="0.6"/><path d="M10.5 0.5L20.3 6L10.5 11.5L0.7 6Z" fill="#eeeeee"/><path d="M10.5 11.5V22.5L0.7 17V6Z" fill="#c4c4c4"/><path d="M10.5 6L15.4 8.8V14.4L10.5 17.2L5.6 14.4V8.8Z" fill="#222"/><path d="M10.5 11.5V16.6M10.5 11.5L6.2 9M10.5 11.5L14.8 9" stroke="#e8e8e8" stroke-width="1.3" fill="none"/></svg>
<svg style="left:358px;top:1048.5px" width="21" height="23" viewBox="0 0 21 23"><path d="M10.5 0.5L20.3 6V17L10.5 22.5L0.7 17V6Z" fill="#303030"/><path d="M10.5 0.5L20.3 6L10.5 11.5L0.7 6Z" fill="#3c3c3c"/><path d="M10.5 11.8V19.2M10.5 11.8L4.2 8.2M10.5 11.8L16.8 8.2" stroke="#ffffff" stroke-width="2" fill="none"/><path d="M10.5 4.4L13 8.6L10.5 10L8 8.6ZM3.6 15.6L3.8 10.6L6.2 12V14.8ZM17.4 15.6L17.2 10.6L14.8 12V14.8Z" fill="#ffffff"/></svg>
<svg style="left:406px;top:1048.5px" width="25" height="23" viewBox="0 0 25 23"><path d="M17.6 0L24.4 2.8V20.2L17.6 23L6.2 13.4L2 16.8L0 15.8V7.2L2 6.2L6.2 9.6ZM17.6 6.6L10.2 11.5L17.6 16.4ZM2.4 9.4V13.6L4.6 11.5Z" fill="#8a5cc9"/><path d="M17.6 0L24.4 2.8V20.2L17.6 23Z" fill="#a77ddc"/></svg>
<svg style="left:1537px;top:1050px" width="24" height="19" viewBox="0 0 24 19"><circle cx="8" cy="7" r="5.6" fill="#f6c343"/><path d="M7.5 18A4.4 4.4 0 0 1 7 9.3A5.6 5.6 0 0 1 17.4 8.6A4.8 4.8 0 0 1 18.6 18Z" fill="#f2f6fb" stroke="#b9cfe6" stroke-width="0.8"/></svg>
<div class="t" style="left:1569px;top:1051px;font-size:15.5px;letter-spacing:-1.00px;color:#1a1a1a;line-height:20px;height:20px">18°C</div>
<div class="t" style="left:1609px;top:1051px;font-size:13.8px;letter-spacing:-0.06px;color:#1a1a1a;line-height:20px;height:20px">多雲時陰</div>
<svg style="left:1681.5px;top:1057px" width="13" height="8" viewBox="0 0 13 8"><path d="M0.8 7.2L6.5 1.2L12.2 7.2" fill="none" stroke="#1a1a1a" stroke-width="1.4"/></svg>
<svg style="left:1706px;top:1052px" width="11" height="17" viewBox="0 0 11 17"><rect x="3" y="0" width="5" height="10" rx="2.5" fill="#1a1a1a"/><path d="M0.8 7.5A4.7 4.7 0 0 0 10.2 7.5M5.5 12.4V15.6M2.6 16H8.4" fill="none" stroke="#1a1a1a" stroke-width="1.2"/></svg>
<svg style="left:1730.5px;top:1054.5px" width="14" height="13" viewBox="0 0 14 13"><path d="M0.8 12.4A12 12 0 0 1 13 0.6" fill="none" stroke="#8a8a8a" stroke-width="1.1"/><path d="M4.6 12.4A8.4 8.4 0 0 1 13 4.2M8.2 12.4A4.8 4.8 0 0 1 13 7.8" fill="none" stroke="#1a1a1a" stroke-width="1.3"/><path d="M10.4 12.6A2.6 2.6 0 0 1 13 10.2V12.6Z" fill="#1a1a1a"/></svg>
<svg style="left:1751.5px;top:1053.5px" width="17" height="14" viewBox="0 0 17 14"><path d="M0.6 4.6H3.4L7 1.2V12.8L3.4 9.4H0.6Z" fill="none" stroke="#1a1a1a" stroke-width="1.1"/><path d="M9.4 4.6A3.4 3.4 0 0 1 9.4 9.4M11.4 2.6A6.2 6.2 0 0 1 11.4 11.4" fill="none" stroke="#1a1a1a" stroke-width="1.1"/><path d="M13.6 0.8A9 9 0 0 1 13.6 13.2" fill="none" stroke="#9a9a9a" stroke-width="1"/></svg>
<div class="t" style="left:1775.5px;top:1051px;color:#1a1a1a;font-size:14.5px;line-height:20px;height:20px">英</div>
<div class="t" style="left:1802px;top:1042.5px;font-size:12.2px;letter-spacing:-0.32px;color:#1a1a1a">下午 02:51</div>
<div class="t" style="left:1802px;top:1060.5px;font-size:12.2px;letter-spacing:0.35px;color:#1a1a1a">2022/2/17</div>
<svg style="left:1878px;top:1052px" width="17" height="16" viewBox="0 0 17 16"><path d="M0.7 0.7H16.3V11.4H10.6L8.4 14.6V11.4H0.7Z" fill="none" stroke="#1a1a1a" stroke-width="1.2"/></svg>
</body></html>
